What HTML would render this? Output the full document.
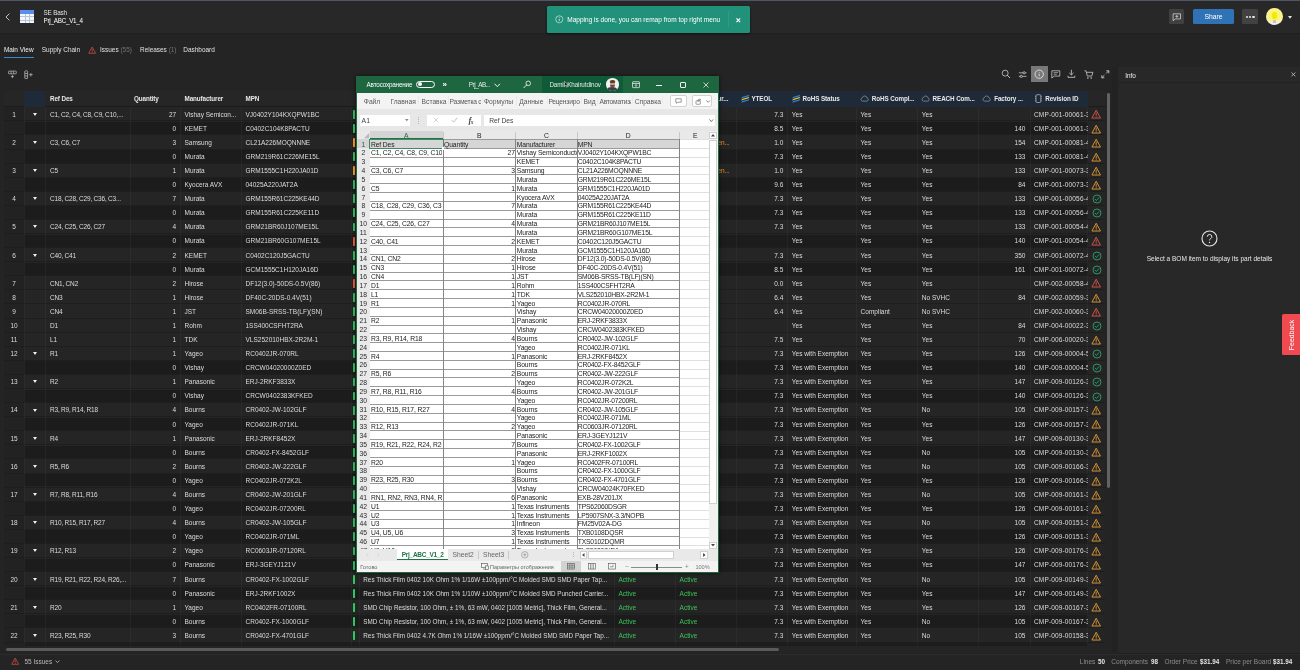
<!DOCTYPE html>
<html><head><meta charset="utf-8"><title>BOM</title><style>
html,body{margin:0;padding:0;background:#242424}
body{width:1300px;height:670px;position:relative;overflow:hidden;font-family:"Liberation Sans",sans-serif}
#root{position:absolute;left:0;top:0;width:1300px;height:670px;will-change:transform}
.t{position:absolute;font-size:6.5px;line-height:10px;height:10px;color:#dcdcdc;white-space:nowrap}
.t.h{color:#e8e8e8;font-weight:bold;font-size:6.3px;letter-spacing:-0.1px}
.t.c{text-align:center}
.t.d{font-size:6.33px}
.t.rf{letter-spacing:-0.15px;word-spacing:-0.3px}
.t.r{text-align:right}
.t.act{color:#3cc35a}
.t.org{color:#f3961f;letter-spacing:-0.1px}
.t.rev{width:53.8px;overflow:hidden;font-size:6.5px;letter-spacing:0.15px}
.t b{color:#e6e6e6}
.ic{position:absolute;overflow:visible}
.hdr{position:absolute;background:#262626;border-bottom:0.8px solid #1c1c1c;box-sizing:border-box}
.hsel{position:absolute;background:#1e2a37}
.row{position:absolute;left:24.2px;width:1081.3px;height:14.085px;box-sizing:border-box;border-bottom:0.7px solid #1e1e1e}
.row.rm{background:#252525}
.row.rs{background:#252525}
.row.rs::after{content:'';position:absolute;left:0;right:0;top:0.6px;bottom:0.1px;background:#1c1c1c}
.rnum{position:absolute;left:4px;width:20.2px;height:14.085px;background:#222;box-sizing:border-box;border-bottom:0.7px solid #1d1d1d}
.vsep{position:absolute;top:107.3px;width:0.8px;height:538.3px;background:rgba(255,255,255,0.035)}
.bar{position:absolute;left:352.8px;width:2.1px;height:8.9px;border-radius:0.4px}
.car{position:absolute;width:0;height:0;border-left:2.3px solid transparent;border-right:2.3px solid transparent;border-top:3.1px solid #f0f0f0}
#xl{position:absolute;background:#1d6640;box-shadow:0 0 4px rgba(0,0,0,.6)}
.xt{position:absolute;background:#1d6640}
.xt2{position:absolute;background:#105b37}
.x{position:absolute;line-height:10px;height:10px;white-space:nowrap}
.x.cell{font-size:6.75px;color:#1c1c1c;overflow:hidden;letter-spacing:-0.12px}
.x.cell.dd{letter-spacing:-0.2px}
</style></head><body><div id="root">
<div style="position:absolute;left:0;top:0;width:1300px;height:1.1px;background:#4f5566"></div>
<div style="position:absolute;left:0;top:1.1px;width:1300px;height:31.7px;background:#282828;border-bottom:0.9px solid #1f1f1f"></div>
<svg class="ic" style="left:5.2px;top:12.6px" width="5.4" height="8" viewBox="0 0 8 12"><path d="M6.6 1L1.4 6L6.6 11" fill="none" stroke="#d8d8d8" stroke-width="1.3"/></svg>
<div style="position:absolute;left:20.2px;top:10.4px;width:14.2px;height:12.4px;background:#f4f6fb;border-radius:0.6px;overflow:hidden"><div style="position:absolute;left:0;top:0;width:100%;height:3.2px;background:#5b8def"></div><div style="position:absolute;left:0;top:6.1px;width:100%;height:0.7px;background:#b9c3d6"></div><div style="position:absolute;left:0;top:9.2px;width:100%;height:0.7px;background:#b9c3d6"></div><div style="position:absolute;left:4.5px;top:3.2px;width:0.7px;height:10px;background:#b9c3d6"></div><div style="position:absolute;left:9.2px;top:3.2px;width:0.7px;height:10px;background:#b9c3d6"></div></div>
<div class="t" style="left:43.6px;top:7.7px;color:#e0e0e0;font-size:6.3px;letter-spacing:-0.18px">SE Bash</div>
<div class="t" style="left:43.6px;top:15.7px;color:#fff;font-size:6.3px;letter-spacing:-0.260px;">Prj_ABC_V1_4</div>
<div style="position:absolute;left:546.8px;top:6.3px;width:203.6px;height:26.6px;background:#22917a;border-radius:1.6px;box-shadow:0 1px 3px rgba(0,0,0,.5)"></div>
<svg class="ic" style="left:554.6px;top:15.4px" width="8.6" height="8.6" viewBox="0 0 16 16"><circle cx="8" cy="8" r="6.6" fill="none" stroke="#e8f5f1" stroke-width="1.1"/><path d="M8 7.2V11.4" stroke="#e8f5f1" stroke-width="1.3"/><circle cx="8" cy="5" r="0.9" fill="#e8f5f1"/></svg>
<div class="t" style="left:567.3px;top:14.7px;color:#fff;font-size:6.52px">Mapping is done, you can remap from top right menu</div>
<div style="position:absolute;left:728px;top:11.2px;width:0.6px;height:15.4px;background:#309c86"></div>
<svg class="ic" style="left:735.7px;top:17.5px" width="4.6" height="4.6" viewBox="0 0 10 10"><path d="M1 1L9 9M9 1L1 9" stroke="#fff" stroke-width="2.4"/></svg>
<div style="position:absolute;left:1169.2px;top:9.2px;width:15px;height:15.3px;background:#404040;border-radius:1.5px"></div>
<svg class="ic" style="left:1172px;top:12.8px" width="9.6" height="8.6" viewBox="0 0 18 16"><path d="M2 1.5H16V11H6L2 14.5V11Z" fill="none" stroke="#dedede" stroke-width="1.4" stroke-linejoin="round"/><path d="M9 3.6V8.8M6.2 6.2H11.8" stroke="#dedede" stroke-width="1.4"/></svg>
<div style="position:absolute;left:1193.4px;top:9px;width:40.2px;height:15.3px;background:#2f72b5;border-radius:1.6px"></div>
<div class="t" style="left:1193.4px;width:40.2px;text-align:center;top:11.6px;color:#fff;font-size:6.8px">Share</div>
<div style="position:absolute;left:1242.2px;top:9.2px;width:15.8px;height:15.3px;background:#424242;border-radius:1.5px"></div>
<div style="position:absolute;left:1245.6px;top:15.7px;width:2.3px;height:2.3px;border-radius:50%;background:#e6e6e6"></div>
<div style="position:absolute;left:1248.9px;top:15.7px;width:2.3px;height:2.3px;border-radius:50%;background:#e6e6e6"></div>
<div style="position:absolute;left:1252.3px;top:15.7px;width:2.3px;height:2.3px;border-radius:50%;background:#e6e6e6"></div>
<div style="position:absolute;left:1266.2px;top:8.2px;width:17px;height:17px;border-radius:50%;background:linear-gradient(180deg, rgba(255,255,255,0) 68%, #efefef 92%), radial-gradient(circle at 50% 44%, #f9f36e 0 24%, #faf58c 55%, #fbf8ae 82%)"></div>
<div style="position:absolute;left:1272px;top:12.4px;width:5.4px;height:6.8px;border-radius:50% 50% 45% 45%;background:#f7e900"></div>
<div style="position:absolute;left:1273.4px;top:19.8px;width:2.6px;height:2.8px;background:#c4c4c4;border-radius:0.6px"></div>
<svg class="ic" style="left:1287.6px;top:15.8px" width="4" height="2.8" viewBox="0 0 10 7"><path d="M0 0H10L5 7Z" fill="#e6e6e6"/></svg>
<div class="t" style="left:4px;top:44.9px;color:#f0f0f0;font-size:6.45px">Main View</div>
<div style="position:absolute;left:4px;top:56.6px;width:30px;height:1.1px;background:#3d86c9"></div>
<div class="t" style="left:41.8px;top:44.9px;color:#e0e0e0;font-size:6.45px">Supply Chain</div>
<svg class="ic" style="left:88.1px;top:45.6px" width="8.4" height="8.4" viewBox="0 0 20 20"><path d="M10 2.4 L18.2 17.4 H1.8 Z" fill="none" stroke="#d9534a" stroke-width="1.7" stroke-linejoin="round"/><path d="M10 7.6 V12.4" stroke="#d9534a" stroke-width="1.6" stroke-linecap="round"/><circle cx="10" cy="14.9" r="1" fill="#d9534a"/></svg>
<div class="t" style="left:100px;top:44.9px;color:#e0e0e0;font-size:6.45px">Issues <span style="color:#747474">(55)</span></div>
<div class="t" style="left:140px;top:44.9px;color:#e0e0e0;font-size:6.45px">Releases <span style="color:#747474">(1)</span></div>
<div class="t" style="left:183.3px;top:44.9px;color:#e0e0e0;font-size:6.45px">Dashboard</div>
<svg class="ic" style="left:7.7px;top:70.1px" width="8.8" height="9" viewBox="0 0 18 17"><rect x="1" y="1.5" width="16" height="5.6" rx="1" fill="none" stroke="#cfcfcf" stroke-width="1.3"/><path d="M6.3 1.5V7M11.7 1.5V7M9 9.5V16M5.8 12.8H12.2" stroke="#cfcfcf" stroke-width="1.3"/></svg>
<svg class="ic" style="left:23.6px;top:69.6px" width="9.2" height="9.4" viewBox="0 0 18 17"><rect x="1.5" y="1" width="5.6" height="15" rx="1" fill="none" stroke="#cfcfcf" stroke-width="1.3"/><path d="M1.5 6H7M1.5 11H7M10 8.5H17M13.5 5V12" stroke="#cfcfcf" stroke-width="1.3"/></svg>
<div style="position:absolute;left:1030.9px;top:66px;width:16.9px;height:16.3px;background:#787878"></div>
<svg class="ic" style="left:1001px;top:69px" width="9.6" height="9.6" viewBox="0 0 18 18"><circle cx="7.8" cy="7.8" r="5.6" fill="none" stroke="#d6d6d6" stroke-width="1.4"/><path d="M12 12L16.4 16.4" stroke="#d6d6d6" stroke-width="1.6" stroke-linecap="round"/></svg>
<svg class="ic" style="left:1018px;top:69.8px" width="9.4" height="9.2" viewBox="0 0 18 18"><path d="M1.5 5.5H16.5M1.5 12.5H16.5" stroke="#d6d6d6" stroke-width="1.4"/><circle cx="11.8" cy="5.5" r="2.2" fill="#242424" stroke="#d6d6d6" stroke-width="1.4"/><circle cx="6.2" cy="12.5" r="2.2" fill="#242424" stroke="#d6d6d6" stroke-width="1.4"/></svg>
<svg class="ic" style="left:1034.3px;top:68.8px" width="10.4" height="10.4" viewBox="0 0 18 18"><circle cx="9" cy="9" r="7.2" fill="none" stroke="#fff" stroke-width="1.2"/><path d="M9 8.2V12.8" stroke="#fff" stroke-width="1.2"/><circle cx="9" cy="5.8" r="0.8" fill="#fff"/></svg>
<svg class="ic" style="left:1050.6px;top:70px" width="9.6" height="9" viewBox="0 0 18 17"><path d="M1.5 1.5H16.5V11.5H6L1.5 15.2Z" fill="none" stroke="#d6d6d6" stroke-width="1.4" stroke-linejoin="round"/><path d="M4.8 5H13.2M4.8 8H10.8" stroke="#d6d6d6" stroke-width="1.2"/></svg>
<svg class="ic" style="left:1067.3px;top:68.9px" width="8.8" height="9.4" viewBox="0 0 16 18"><path d="M8 1.5V11M4 7.4L8 11.4L12 7.4M1.5 13V16H14.5V13" fill="none" stroke="#d6d6d6" stroke-width="1.5"/></svg>
<svg class="ic" style="left:1083.5px;top:69.6px" width="10" height="9.6" viewBox="0 0 20 19"><path d="M1 1.5H4L6.6 12H15.5L17.8 4.5H5" fill="none" stroke="#d6d6d6" stroke-width="1.5" stroke-linejoin="round"/><circle cx="7.8" cy="15.8" r="1.5" fill="#d6d6d6"/><circle cx="14.4" cy="15.8" r="1.5" fill="#d6d6d6"/></svg>
<svg class="ic" style="left:1101px;top:70px" width="8.6" height="8.6" viewBox="0 0 16 16"><path d="M9.8 1.5H14.5V6.2M14.5 1.5L9.6 6.4M6.2 14.5H1.5V9.8M1.5 14.5L6.4 9.6" fill="none" stroke="#d6d6d6" stroke-width="1.5"/></svg>
<div style="position:absolute;left:1111.6px;top:66.6px;width:6.6px;height:586px;background:#222"></div>
<div style="position:absolute;left:1118.2px;top:66.6px;width:181.8px;height:586.4px;background:#282828;border-bottom:0.9px solid #1f1f1f"></div>
<div style="position:absolute;left:1118.2px;top:82.4px;width:181.8px;height:0.7px;background:#222"></div>
<div class="t" style="left:1125.2px;top:70.5px;color:#ededed;font-size:6.4px">Info</div>
<svg class="ic" style="left:1290.6px;top:72.2px" width="4.8" height="4.8" viewBox="0 0 10 10"><path d="M1 1L9 9M9 1L1 9" stroke="#d8d8d8" stroke-width="1.5"/></svg>
<svg class="ic" style="left:1200.8px;top:229.6px" width="17" height="17" viewBox="0 0 34 34"><circle cx="17" cy="17" r="15" fill="none" stroke="#e6e6e6" stroke-width="2.2"/><path d="M12.6 13.4a4.5 4.5 0 1 1 6.6 4c-1.6 .9 -2.2 1.6 -2.2 3.4" fill="none" stroke="#e6e6e6" stroke-width="2"/><circle cx="17" cy="25" r="1.4" fill="#e6e6e6"/></svg>
<div class="t" style="left:1118.6px;width:181.8px;text-align:center;top:253.8px;color:#e8e8e8;font-size:6.53px">Select a BOM item to display its part details</div>
<div style="position:absolute;left:1282.4px;top:314.4px;width:17.6px;height:40.6px;background:#f04a50;border-radius:1.6px 0 0 1.6px"></div>
<div class="t" style="left:1272.2px;top:329.8px;width:40px;text-align:center;color:#fff;font-size:6.9px;transform:rotate(-90deg)">Feedback</div>
<div style="position:absolute;left:0;top:654px;width:1300px;height:16px;background:#242424;border-top:0.8px solid #2c2c2c;box-sizing:border-box"></div>
<svg class="ic" style="left:11.4px;top:657.3px" width="8.4" height="8.4" viewBox="0 0 20 20"><path d="M10 2.4 L18.2 17.4 H1.8 Z" fill="none" stroke="#d9534a" stroke-width="1.7" stroke-linejoin="round"/><path d="M10 7.6 V12.4" stroke="#d9534a" stroke-width="1.6" stroke-linecap="round"/><circle cx="10" cy="14.9" r="1" fill="#d9534a"/></svg>
<div class="t" style="left:24.4px;top:656.6px;color:#b8b8b8;font-size:6.5px">55 Issues</div>
<svg class="ic" style="left:54.8px;top:660.2px" width="5" height="3.4" viewBox="0 0 10 7"><path d="M1 1L5 5.5L9 1" fill="none" stroke="#b8b8b8" stroke-width="1.6"/></svg>
<div class="t" style="left:1079.8px;top:656.9px;color:#8e8e8e;font-size:6.5px">Lines</div>
<div class="t" style="left:1098px;top:656.9px;color:#e4e4e4;font-weight:bold;font-size:6.3px">50</div>
<div class="t" style="left:1111.2px;top:656.9px;color:#8e8e8e;font-size:6.5px">Components</div>
<div class="t" style="left:1151px;top:656.9px;color:#e4e4e4;font-weight:bold;font-size:6.3px">98</div>
<div class="t" style="left:1164.4px;top:656.9px;color:#8e8e8e;font-size:6.5px">Order Price</div>
<div class="t" style="left:1200px;top:656.9px;color:#e4e4e4;font-weight:bold;font-size:6.3px">$31.94</div>
<div class="t" style="left:1226px;top:656.9px;color:#8e8e8e;font-size:6.5px">Price per Board</div>
<div class="t" style="left:1273.1px;top:656.9px;color:#e4e4e4;font-weight:bold;font-size:6.3px">$31.94</div>
<div id="bom">
<div class="hdr" style="left:4px;top:91.2px;width:1101.5px;height:16.1px"></div>
<div class="hsel" style="left:24.2px;top:91.2px;width:21px;height:16.1px"></div>
<div class="hsel" style="left:700px;top:91.2px;width:387.70000000000005px;height:16.1px"></div>
<div class="t h " style="left:50px;top:93.9px">Ref Des</div>
<div class="t h " style="left:134px;top:93.9px">Quantity</div>
<div class="t h " style="left:184.5px;top:93.9px">Manufacturer</div>
<div class="t h " style="left:245.5px;top:93.9px">MPN</div>
<div class="t h " style="left:717.6px;top:93.9px">ur...</div>
<div class="t h " style="left:751.5px;top:93.9px">YTEOL</div>
<div class="t h " style="left:802.6px;top:93.9px">RoHS Status</div>
<div class="t h " style="left:871.8px;top:93.9px">RoHS Compl...</div>
<div class="t h " style="left:932.6px;top:93.9px">REACH Com...</div>
<div class="t h " style="left:994.2px;top:93.9px">Factory ...</div>
<div class="t h " style="left:1045.2px;top:93.9px">Revision ID</div>
<svg class="ic" style="left:740.5px;top:94.4px" width="8.8" height="8.6" viewBox="0 0 22 21"><path d="M2.5 7 L21 1.5 L19 5.2 L0.5 10.7Z" fill="#2f86d6"/><path d="M2.5 12.3 L21 6.8 L19 10.6 L0.5 16.1Z" fill="#f2c230"/><path d="M2.5 17.6 L21 12.1 L19 15.9 L0.5 21.4Z" fill="#2f86d6"/></svg>
<svg class="ic" style="left:791.8000000000001px;top:94.4px" width="8.8" height="8.6" viewBox="0 0 22 21"><path d="M2.5 7 L21 1.5 L19 5.2 L0.5 10.7Z" fill="#2f86d6"/><path d="M2.5 12.3 L21 6.8 L19 10.6 L0.5 16.1Z" fill="#f2c230"/><path d="M2.5 17.6 L21 12.1 L19 15.9 L0.5 21.4Z" fill="#2f86d6"/></svg>
<svg class="ic" style="left:859.7px;top:95.30000000000001px" width="9" height="7" viewBox="0 0 24 18"><path d="M6.5 16 H18 a4.3 4.3 0 0 0 .6 -8.5 A6.3 6.3 0 0 0 6.4 6.6 A4.8 4.8 0 0 0 6.5 16Z" fill="none" stroke="#9aa3ad" stroke-width="1.8"/></svg>
<svg class="ic" style="left:920.7px;top:95.30000000000001px" width="9" height="7" viewBox="0 0 24 18"><path d="M6.5 16 H18 a4.3 4.3 0 0 0 .6 -8.5 A6.3 6.3 0 0 0 6.4 6.6 A4.8 4.8 0 0 0 6.5 16Z" fill="none" stroke="#9aa3ad" stroke-width="1.8"/></svg>
<svg class="ic" style="left:982.2px;top:95.30000000000001px" width="9" height="7" viewBox="0 0 24 18"><path d="M6.5 16 H18 a4.3 4.3 0 0 0 .6 -8.5 A6.3 6.3 0 0 0 6.4 6.6 A4.8 4.8 0 0 0 6.5 16Z" fill="none" stroke="#9aa3ad" stroke-width="1.8"/></svg>
<svg class="ic" style="left:1034.8px;top:94.30000000000001px" width="6.8" height="9.2" viewBox="0 0 14 19"><rect x="2" y="1.5" width="10" height="16" rx="2" fill="none" stroke="#b8c0c8" stroke-width="1.5"/><path d="M0 5H2M0 9.5H2M0 14H2M12 5H14M12 9.5H14M12 14H14" stroke="#b8c0c8" stroke-width="1.3"/></svg>
<div class="row rm" style="top:107.30px"></div>
<div class="rnum" style="top:107.30px"></div>
<div class="rnum" style="top:107.30px;left:1087.7px;width:17.8px;background:#252525"></div>
<div class="t c" style="left:4px;width:20.2px;top:109.69px">1</div>
<div class="car" style="left:32.800000000000004px;top:112.74px"></div>
<div class="t rf" style="left:50px;top:109.69px">C1, C2, C4, C8, C9, C10,...</div>
<div class="t r " style="left:116.19999999999999px;width:60px;top:109.69px">27</div>
<div class="t " style="left:184.5px;top:109.69px">Vishay Semicon...</div>
<div class="t " style="left:245.5px;top:109.69px">VJ0402Y104KXQPW1BC</div>
<div class="bar" style="top:109.90px;background:#2fc75f"></div>
<div class="t r " style="left:723.3px;width:60px;top:109.69px">7.3</div>
<div class="t " style="left:791.8px;top:109.69px">Yes</div>
<div class="t " style="left:860.6px;top:109.69px">Yes</div>
<div class="t " style="left:921.8px;top:109.69px">Yes</div>
<div class="t rev" style="left:1034px;top:109.69px">CMP-001-00061-3</div>
<svg class="ic" style="left:1091.30px;top:109.44px" width="10.4" height="10.4" viewBox="0 0 20 20"><path d="M10 2.4 L18.2 17.4 H1.8 Z" fill="none" stroke="#e2574c" stroke-width="1.7" stroke-linejoin="round"/><path d="M10 7.6 V12.4" stroke="#e2574c" stroke-width="1.6" stroke-linecap="round"/><circle cx="10" cy="14.9" r="1" fill="#e2574c"/></svg>
<div class="row rs" style="top:121.38px"></div>
<div class="rnum" style="top:121.38px"></div>
<div class="rnum" style="top:121.38px;left:1087.7px;width:17.8px;background:#252525"></div>
<div class="t r " style="left:116.19999999999999px;width:60px;top:123.78px">0</div>
<div class="t " style="left:184.5px;top:123.78px">KEMET</div>
<div class="t " style="left:245.5px;top:123.78px">C0402C104K8PACTU</div>
<div class="bar" style="top:123.98px;background:#2fc75f"></div>
<div class="t r " style="left:723.3px;width:60px;top:123.78px">8.5</div>
<div class="t " style="left:791.8px;top:123.78px">Yes</div>
<div class="t " style="left:860.6px;top:123.78px">Yes</div>
<div class="t " style="left:921.8px;top:123.78px">Yes</div>
<div class="t r " style="left:965.4000000000001px;width:60px;top:123.78px">140</div>
<div class="t rev" style="left:1034px;top:123.78px">CMP-001-00061-3</div>
<svg class="ic" style="left:1091.30px;top:123.53px" width="10.4" height="10.4" viewBox="0 0 20 20"><path d="M10 2.4 L18.2 17.4 H1.8 Z" fill="none" stroke="#e89f35" stroke-width="1.7" stroke-linejoin="round"/><path d="M10 7.6 V12.4" stroke="#e89f35" stroke-width="1.6" stroke-linecap="round"/><circle cx="10" cy="14.9" r="1" fill="#e89f35"/></svg>
<div class="row rm" style="top:135.47px"></div>
<div class="rnum" style="top:135.47px"></div>
<div class="rnum" style="top:135.47px;left:1087.7px;width:17.8px;background:#252525"></div>
<div class="t c" style="left:4px;width:20.2px;top:137.86px">2</div>
<div class="car" style="left:32.800000000000004px;top:140.91px"></div>
<div class="t rf" style="left:50px;top:137.86px">C3, C6, C7</div>
<div class="t r " style="left:116.19999999999999px;width:60px;top:137.86px">3</div>
<div class="t " style="left:184.5px;top:137.86px">Samsung</div>
<div class="t " style="left:245.5px;top:137.86px">CL21A226MOQNNNE</div>
<div class="bar" style="top:138.07px;background:#f5a21e"></div>
<div class="t org" style="left:717.4px;top:137.86px">en...</div>
<div class="t r " style="left:723.3px;width:60px;top:137.86px">1.0</div>
<div class="t " style="left:791.8px;top:137.86px">Yes</div>
<div class="t " style="left:860.6px;top:137.86px">Yes</div>
<div class="t " style="left:921.8px;top:137.86px">Yes</div>
<div class="t r " style="left:965.4000000000001px;width:60px;top:137.86px">154</div>
<div class="t rev" style="left:1034px;top:137.86px">CMP-001-00081-4</div>
<svg class="ic" style="left:1091.30px;top:137.61px" width="10.4" height="10.4" viewBox="0 0 20 20"><path d="M10 2.4 L18.2 17.4 H1.8 Z" fill="none" stroke="#e89f35" stroke-width="1.7" stroke-linejoin="round"/><path d="M10 7.6 V12.4" stroke="#e89f35" stroke-width="1.6" stroke-linecap="round"/><circle cx="10" cy="14.9" r="1" fill="#e89f35"/></svg>
<div class="row rs" style="top:149.56px"></div>
<div class="rnum" style="top:149.56px"></div>
<div class="rnum" style="top:149.56px;left:1087.7px;width:17.8px;background:#252525"></div>
<div class="t r " style="left:116.19999999999999px;width:60px;top:151.95px">0</div>
<div class="t " style="left:184.5px;top:151.95px">Murata</div>
<div class="t " style="left:245.5px;top:151.95px">GRM219R61C226ME15L</div>
<div class="bar" style="top:152.16px;background:#2fc75f"></div>
<div class="t r " style="left:723.3px;width:60px;top:151.95px">7.3</div>
<div class="t " style="left:791.8px;top:151.95px">Yes</div>
<div class="t " style="left:860.6px;top:151.95px">Yes</div>
<div class="t " style="left:921.8px;top:151.95px">Yes</div>
<div class="t r " style="left:965.4000000000001px;width:60px;top:151.95px">133</div>
<div class="t rev" style="left:1034px;top:151.95px">CMP-001-00081-4</div>
<svg class="ic" style="left:1091.30px;top:151.70px" width="10.4" height="10.4" viewBox="0 0 20 20"><path d="M10 2.4 L18.2 17.4 H1.8 Z" fill="none" stroke="#e89f35" stroke-width="1.7" stroke-linejoin="round"/><path d="M10 7.6 V12.4" stroke="#e89f35" stroke-width="1.6" stroke-linecap="round"/><circle cx="10" cy="14.9" r="1" fill="#e89f35"/></svg>
<div class="row rm" style="top:163.64px"></div>
<div class="rnum" style="top:163.64px"></div>
<div class="rnum" style="top:163.64px;left:1087.7px;width:17.8px;background:#252525"></div>
<div class="t c" style="left:4px;width:20.2px;top:166.03px">3</div>
<div class="car" style="left:32.800000000000004px;top:169.08px"></div>
<div class="t rf" style="left:50px;top:166.03px">C5</div>
<div class="t r " style="left:116.19999999999999px;width:60px;top:166.03px">1</div>
<div class="t " style="left:184.5px;top:166.03px">Murata</div>
<div class="t " style="left:245.5px;top:166.03px">GRM1555C1H220JA01D</div>
<div class="bar" style="top:166.24px;background:#f5a21e"></div>
<div class="t org" style="left:717.4px;top:166.03px">en...</div>
<div class="t r " style="left:723.3px;width:60px;top:166.03px">1.0</div>
<div class="t " style="left:791.8px;top:166.03px">Yes</div>
<div class="t " style="left:860.6px;top:166.03px">Yes</div>
<div class="t " style="left:921.8px;top:166.03px">Yes</div>
<div class="t r " style="left:965.4000000000001px;width:60px;top:166.03px">133</div>
<div class="t rev" style="left:1034px;top:166.03px">CMP-001-00073-3</div>
<svg class="ic" style="left:1091.30px;top:165.78px" width="10.4" height="10.4" viewBox="0 0 20 20"><path d="M10 2.4 L18.2 17.4 H1.8 Z" fill="none" stroke="#e89f35" stroke-width="1.7" stroke-linejoin="round"/><path d="M10 7.6 V12.4" stroke="#e89f35" stroke-width="1.6" stroke-linecap="round"/><circle cx="10" cy="14.9" r="1" fill="#e89f35"/></svg>
<div class="row rs" style="top:177.73px"></div>
<div class="rnum" style="top:177.73px"></div>
<div class="rnum" style="top:177.73px;left:1087.7px;width:17.8px;background:#252525"></div>
<div class="t r " style="left:116.19999999999999px;width:60px;top:180.12px">0</div>
<div class="t " style="left:184.5px;top:180.12px">Kyocera AVX</div>
<div class="t " style="left:245.5px;top:180.12px">04025A220JAT2A</div>
<div class="bar" style="top:180.33px;background:#2fc75f"></div>
<div class="t r " style="left:723.3px;width:60px;top:180.12px">9.6</div>
<div class="t " style="left:791.8px;top:180.12px">Yes</div>
<div class="t " style="left:860.6px;top:180.12px">Yes</div>
<div class="t " style="left:921.8px;top:180.12px">Yes</div>
<div class="t r " style="left:965.4000000000001px;width:60px;top:180.12px">84</div>
<div class="t rev" style="left:1034px;top:180.12px">CMP-001-00073-3</div>
<svg class="ic" style="left:1091.30px;top:179.87px" width="10.4" height="10.4" viewBox="0 0 20 20"><path d="M10 2.4 L18.2 17.4 H1.8 Z" fill="none" stroke="#e89f35" stroke-width="1.7" stroke-linejoin="round"/><path d="M10 7.6 V12.4" stroke="#e89f35" stroke-width="1.6" stroke-linecap="round"/><circle cx="10" cy="14.9" r="1" fill="#e89f35"/></svg>
<div class="row rm" style="top:191.81px"></div>
<div class="rnum" style="top:191.81px"></div>
<div class="rnum" style="top:191.81px;left:1087.7px;width:17.8px;background:#252525"></div>
<div class="t c" style="left:4px;width:20.2px;top:194.20px">4</div>
<div class="car" style="left:32.800000000000004px;top:197.25px"></div>
<div class="t rf" style="left:50px;top:194.20px">C18, C28, C29, C36, C3...</div>
<div class="t r " style="left:116.19999999999999px;width:60px;top:194.20px">7</div>
<div class="t " style="left:184.5px;top:194.20px">Murata</div>
<div class="t " style="left:245.5px;top:194.20px">GRM155R61C225KE44D</div>
<div class="bar" style="top:194.41px;background:#2fc75f"></div>
<div class="t r " style="left:723.3px;width:60px;top:194.20px">7.3</div>
<div class="t " style="left:791.8px;top:194.20px">Yes</div>
<div class="t " style="left:860.6px;top:194.20px">Yes</div>
<div class="t " style="left:921.8px;top:194.20px">Yes</div>
<div class="t r " style="left:965.4000000000001px;width:60px;top:194.20px">133</div>
<div class="t rev" style="left:1034px;top:194.20px">CMP-001-00056-4</div>
<svg class="ic" style="left:1091.50px;top:194.35px" width="10" height="10" viewBox="0 0 20 20"><circle cx="10" cy="10" r="8" fill="none" stroke="#2ea673" stroke-width="1.7"/><path d="M6.2 10.3 L9 13 L13.8 7.4" fill="none" stroke="#2ea673" stroke-width="1.7" stroke-linecap="round" stroke-linejoin="round"/></svg>
<div class="row rs" style="top:205.89px"></div>
<div class="rnum" style="top:205.89px"></div>
<div class="rnum" style="top:205.89px;left:1087.7px;width:17.8px;background:#252525"></div>
<div class="t r " style="left:116.19999999999999px;width:60px;top:208.29px">0</div>
<div class="t " style="left:184.5px;top:208.29px">Murata</div>
<div class="t " style="left:245.5px;top:208.29px">GRM155R61C225KE11D</div>
<div class="bar" style="top:208.49px;background:#2fc75f"></div>
<div class="t r " style="left:723.3px;width:60px;top:208.29px">7.3</div>
<div class="t " style="left:791.8px;top:208.29px">Yes</div>
<div class="t " style="left:860.6px;top:208.29px">Yes</div>
<div class="t " style="left:921.8px;top:208.29px">Yes</div>
<div class="t r " style="left:965.4000000000001px;width:60px;top:208.29px">133</div>
<div class="t rev" style="left:1034px;top:208.29px">CMP-001-00056-4</div>
<svg class="ic" style="left:1091.50px;top:208.44px" width="10" height="10" viewBox="0 0 20 20"><circle cx="10" cy="10" r="8" fill="none" stroke="#2ea673" stroke-width="1.7"/><path d="M6.2 10.3 L9 13 L13.8 7.4" fill="none" stroke="#2ea673" stroke-width="1.7" stroke-linecap="round" stroke-linejoin="round"/></svg>
<div class="row rm" style="top:219.98px"></div>
<div class="rnum" style="top:219.98px"></div>
<div class="rnum" style="top:219.98px;left:1087.7px;width:17.8px;background:#252525"></div>
<div class="t c" style="left:4px;width:20.2px;top:222.37px">5</div>
<div class="car" style="left:32.800000000000004px;top:225.42px"></div>
<div class="t rf" style="left:50px;top:222.37px">C24, C25, C26, C27</div>
<div class="t r " style="left:116.19999999999999px;width:60px;top:222.37px">4</div>
<div class="t " style="left:184.5px;top:222.37px">Murata</div>
<div class="t " style="left:245.5px;top:222.37px">GRM21BR60J107ME15L</div>
<div class="bar" style="top:222.58px;background:#2fc75f"></div>
<div class="t r " style="left:723.3px;width:60px;top:222.37px">7.3</div>
<div class="t " style="left:791.8px;top:222.37px">Yes</div>
<div class="t " style="left:860.6px;top:222.37px">Yes</div>
<div class="t " style="left:921.8px;top:222.37px">Yes</div>
<div class="t r " style="left:965.4000000000001px;width:60px;top:222.37px">133</div>
<div class="t rev" style="left:1034px;top:222.37px">CMP-001-00054-4</div>
<svg class="ic" style="left:1091.30px;top:222.12px" width="10.4" height="10.4" viewBox="0 0 20 20"><path d="M10 2.4 L18.2 17.4 H1.8 Z" fill="none" stroke="#e89f35" stroke-width="1.7" stroke-linejoin="round"/><path d="M10 7.6 V12.4" stroke="#e89f35" stroke-width="1.6" stroke-linecap="round"/><circle cx="10" cy="14.9" r="1" fill="#e89f35"/></svg>
<div class="row rs" style="top:234.06px"></div>
<div class="rnum" style="top:234.06px"></div>
<div class="rnum" style="top:234.06px;left:1087.7px;width:17.8px;background:#252525"></div>
<div class="t r " style="left:116.19999999999999px;width:60px;top:236.46px">0</div>
<div class="t " style="left:184.5px;top:236.46px">Murata</div>
<div class="t " style="left:245.5px;top:236.46px">GRM21BR60G107ME15L</div>
<div class="bar" style="top:236.66px;background:#f05a3c"></div>
<div class="t " style="left:791.8px;top:236.46px">Yes</div>
<div class="t " style="left:860.6px;top:236.46px">Yes</div>
<div class="t " style="left:921.8px;top:236.46px">Yes</div>
<div class="t r " style="left:965.4000000000001px;width:60px;top:236.46px">140</div>
<div class="t rev" style="left:1034px;top:236.46px">CMP-001-00054-4</div>
<svg class="ic" style="left:1091.30px;top:236.21px" width="10.4" height="10.4" viewBox="0 0 20 20"><path d="M10 2.4 L18.2 17.4 H1.8 Z" fill="none" stroke="#e2574c" stroke-width="1.7" stroke-linejoin="round"/><path d="M10 7.6 V12.4" stroke="#e2574c" stroke-width="1.6" stroke-linecap="round"/><circle cx="10" cy="14.9" r="1" fill="#e2574c"/></svg>
<div class="row rm" style="top:248.15px"></div>
<div class="rnum" style="top:248.15px"></div>
<div class="rnum" style="top:248.15px;left:1087.7px;width:17.8px;background:#252525"></div>
<div class="t c" style="left:4px;width:20.2px;top:250.54px">6</div>
<div class="car" style="left:32.800000000000004px;top:253.59px"></div>
<div class="t rf" style="left:50px;top:250.54px">C40, C41</div>
<div class="t r " style="left:116.19999999999999px;width:60px;top:250.54px">2</div>
<div class="t " style="left:184.5px;top:250.54px">KEMET</div>
<div class="t " style="left:245.5px;top:250.54px">C0402C120J5GACTU</div>
<div class="bar" style="top:250.75px;background:#2fc75f"></div>
<div class="t r " style="left:723.3px;width:60px;top:250.54px">7.3</div>
<div class="t " style="left:791.8px;top:250.54px">Yes</div>
<div class="t " style="left:860.6px;top:250.54px">Yes</div>
<div class="t " style="left:921.8px;top:250.54px">Yes</div>
<div class="t r " style="left:965.4000000000001px;width:60px;top:250.54px">350</div>
<div class="t rev" style="left:1034px;top:250.54px">CMP-001-00072-4</div>
<svg class="ic" style="left:1091.50px;top:250.69px" width="10" height="10" viewBox="0 0 20 20"><circle cx="10" cy="10" r="8" fill="none" stroke="#2ea673" stroke-width="1.7"/><path d="M6.2 10.3 L9 13 L13.8 7.4" fill="none" stroke="#2ea673" stroke-width="1.7" stroke-linecap="round" stroke-linejoin="round"/></svg>
<div class="row rs" style="top:262.24px"></div>
<div class="rnum" style="top:262.24px"></div>
<div class="rnum" style="top:262.24px;left:1087.7px;width:17.8px;background:#252525"></div>
<div class="t r " style="left:116.19999999999999px;width:60px;top:264.63px">0</div>
<div class="t " style="left:184.5px;top:264.63px">Murata</div>
<div class="t " style="left:245.5px;top:264.63px">GCM1555C1H120JA16D</div>
<div class="bar" style="top:264.84px;background:#2fc75f"></div>
<div class="t r " style="left:723.3px;width:60px;top:264.63px">8.5</div>
<div class="t " style="left:791.8px;top:264.63px">Yes</div>
<div class="t " style="left:860.6px;top:264.63px">Yes</div>
<div class="t " style="left:921.8px;top:264.63px">Yes</div>
<div class="t r " style="left:965.4000000000001px;width:60px;top:264.63px">161</div>
<div class="t rev" style="left:1034px;top:264.63px">CMP-001-00072-4</div>
<svg class="ic" style="left:1091.50px;top:264.78px" width="10" height="10" viewBox="0 0 20 20"><circle cx="10" cy="10" r="8" fill="none" stroke="#2ea673" stroke-width="1.7"/><path d="M6.2 10.3 L9 13 L13.8 7.4" fill="none" stroke="#2ea673" stroke-width="1.7" stroke-linecap="round" stroke-linejoin="round"/></svg>
<div class="row rm" style="top:276.32px"></div>
<div class="rnum" style="top:276.32px"></div>
<div class="rnum" style="top:276.32px;left:1087.7px;width:17.8px;background:#252525"></div>
<div class="t c" style="left:4px;width:20.2px;top:278.71px">7</div>
<div class="t rf" style="left:50px;top:278.71px">CN1, CN2</div>
<div class="t r " style="left:116.19999999999999px;width:60px;top:278.71px">2</div>
<div class="t " style="left:184.5px;top:278.71px">Hirose</div>
<div class="t " style="left:245.5px;top:278.71px">DF12(3.0)-50DS-0.5V(86)</div>
<div class="bar" style="top:278.92px;background:#f05a3c"></div>
<div class="t r " style="left:723.3px;width:60px;top:278.71px">0.0</div>
<div class="t " style="left:791.8px;top:278.71px">Yes</div>
<div class="t " style="left:860.6px;top:278.71px">Yes</div>
<div class="t " style="left:921.8px;top:278.71px">Yes</div>
<div class="t rev" style="left:1034px;top:278.71px">CMP-002-00058-4</div>
<svg class="ic" style="left:1091.30px;top:278.46px" width="10.4" height="10.4" viewBox="0 0 20 20"><path d="M10 2.4 L18.2 17.4 H1.8 Z" fill="none" stroke="#e2574c" stroke-width="1.7" stroke-linejoin="round"/><path d="M10 7.6 V12.4" stroke="#e2574c" stroke-width="1.6" stroke-linecap="round"/><circle cx="10" cy="14.9" r="1" fill="#e2574c"/></svg>
<div class="row rm" style="top:290.41px"></div>
<div class="rnum" style="top:290.41px"></div>
<div class="rnum" style="top:290.41px;left:1087.7px;width:17.8px;background:#252525"></div>
<div class="t c" style="left:4px;width:20.2px;top:292.80px">8</div>
<div class="t rf" style="left:50px;top:292.80px">CN3</div>
<div class="t r " style="left:116.19999999999999px;width:60px;top:292.80px">1</div>
<div class="t " style="left:184.5px;top:292.80px">Hirose</div>
<div class="t " style="left:245.5px;top:292.80px">DF40C-20DS-0.4V(51)</div>
<div class="bar" style="top:293.01px;background:#2fc75f"></div>
<div class="t r " style="left:723.3px;width:60px;top:292.80px">6.4</div>
<div class="t " style="left:791.8px;top:292.80px">Yes</div>
<div class="t " style="left:860.6px;top:292.80px">Yes</div>
<div class="t " style="left:921.8px;top:292.80px">No SVHC</div>
<div class="t r " style="left:965.4000000000001px;width:60px;top:292.80px">84</div>
<div class="t rev" style="left:1034px;top:292.80px">CMP-002-00059-3</div>
<svg class="ic" style="left:1091.30px;top:292.55px" width="10.4" height="10.4" viewBox="0 0 20 20"><path d="M10 2.4 L18.2 17.4 H1.8 Z" fill="none" stroke="#e89f35" stroke-width="1.7" stroke-linejoin="round"/><path d="M10 7.6 V12.4" stroke="#e89f35" stroke-width="1.6" stroke-linecap="round"/><circle cx="10" cy="14.9" r="1" fill="#e89f35"/></svg>
<div class="row rm" style="top:304.49px"></div>
<div class="rnum" style="top:304.49px"></div>
<div class="rnum" style="top:304.49px;left:1087.7px;width:17.8px;background:#252525"></div>
<div class="t c" style="left:4px;width:20.2px;top:306.88px">9</div>
<div class="t rf" style="left:50px;top:306.88px">CN4</div>
<div class="t r " style="left:116.19999999999999px;width:60px;top:306.88px">1</div>
<div class="t " style="left:184.5px;top:306.88px">JST</div>
<div class="t " style="left:245.5px;top:306.88px">SM06B-SRSS-TB(LF)(SN)</div>
<div class="bar" style="top:307.09px;background:#2fc75f"></div>
<div class="t r " style="left:723.3px;width:60px;top:306.88px">6.4</div>
<div class="t " style="left:791.8px;top:306.88px">Yes</div>
<div class="t " style="left:860.6px;top:306.88px">Compliant</div>
<div class="t " style="left:921.8px;top:306.88px">No SVHC</div>
<div class="t rev" style="left:1034px;top:306.88px">CMP-002-00060-3</div>
<svg class="ic" style="left:1091.30px;top:306.63px" width="10.4" height="10.4" viewBox="0 0 20 20"><path d="M10 2.4 L18.2 17.4 H1.8 Z" fill="none" stroke="#e2574c" stroke-width="1.7" stroke-linejoin="round"/><path d="M10 7.6 V12.4" stroke="#e2574c" stroke-width="1.6" stroke-linecap="round"/><circle cx="10" cy="14.9" r="1" fill="#e2574c"/></svg>
<div class="row rm" style="top:318.57px"></div>
<div class="rnum" style="top:318.57px"></div>
<div class="rnum" style="top:318.57px;left:1087.7px;width:17.8px;background:#252525"></div>
<div class="t c" style="left:4px;width:20.2px;top:320.97px">10</div>
<div class="t rf" style="left:50px;top:320.97px">D1</div>
<div class="t r " style="left:116.19999999999999px;width:60px;top:320.97px">1</div>
<div class="t " style="left:184.5px;top:320.97px">Rohm</div>
<div class="t " style="left:245.5px;top:320.97px">1SS400CSFHT2RA</div>
<div class="bar" style="top:321.18px;background:#2fc75f"></div>
<div class="t " style="left:791.8px;top:320.97px">Yes</div>
<div class="t " style="left:860.6px;top:320.97px">Yes</div>
<div class="t " style="left:921.8px;top:320.97px">Yes</div>
<div class="t r " style="left:965.4000000000001px;width:60px;top:320.97px">84</div>
<div class="t rev" style="left:1034px;top:320.97px">CMP-004-00022-3</div>
<svg class="ic" style="left:1091.50px;top:321.12px" width="10" height="10" viewBox="0 0 20 20"><circle cx="10" cy="10" r="8" fill="none" stroke="#2ea673" stroke-width="1.7"/><path d="M6.2 10.3 L9 13 L13.8 7.4" fill="none" stroke="#2ea673" stroke-width="1.7" stroke-linecap="round" stroke-linejoin="round"/></svg>
<div class="row rm" style="top:332.66px"></div>
<div class="rnum" style="top:332.66px"></div>
<div class="rnum" style="top:332.66px;left:1087.7px;width:17.8px;background:#252525"></div>
<div class="t c" style="left:4px;width:20.2px;top:335.05px">11</div>
<div class="t rf" style="left:50px;top:335.05px">L1</div>
<div class="t r " style="left:116.19999999999999px;width:60px;top:335.05px">1</div>
<div class="t " style="left:184.5px;top:335.05px">TDK</div>
<div class="t " style="left:245.5px;top:335.05px">VLS252010HBX-2R2M-1</div>
<div class="bar" style="top:335.26px;background:#2fc75f"></div>
<div class="t r " style="left:723.3px;width:60px;top:335.05px">7.5</div>
<div class="t " style="left:791.8px;top:335.05px">Yes</div>
<div class="t " style="left:860.6px;top:335.05px">Yes</div>
<div class="t " style="left:921.8px;top:335.05px">Yes</div>
<div class="t r " style="left:965.4000000000001px;width:60px;top:335.05px">70</div>
<div class="t rev" style="left:1034px;top:335.05px">CMP-006-00020-3</div>
<svg class="ic" style="left:1091.30px;top:334.80px" width="10.4" height="10.4" viewBox="0 0 20 20"><path d="M10 2.4 L18.2 17.4 H1.8 Z" fill="none" stroke="#e89f35" stroke-width="1.7" stroke-linejoin="round"/><path d="M10 7.6 V12.4" stroke="#e89f35" stroke-width="1.6" stroke-linecap="round"/><circle cx="10" cy="14.9" r="1" fill="#e89f35"/></svg>
<div class="row rm" style="top:346.75px"></div>
<div class="rnum" style="top:346.75px"></div>
<div class="rnum" style="top:346.75px;left:1087.7px;width:17.8px;background:#252525"></div>
<div class="t c" style="left:4px;width:20.2px;top:349.14px">12</div>
<div class="car" style="left:32.800000000000004px;top:352.19px"></div>
<div class="t rf" style="left:50px;top:349.14px">R1</div>
<div class="t r " style="left:116.19999999999999px;width:60px;top:349.14px">1</div>
<div class="t " style="left:184.5px;top:349.14px">Yageo</div>
<div class="t " style="left:245.5px;top:349.14px">RC0402JR-070RL</div>
<div class="bar" style="top:349.35px;background:#2fc75f"></div>
<div class="t r " style="left:723.3px;width:60px;top:349.14px">7.3</div>
<div class="t " style="left:791.8px;top:349.14px">Yes with Exemption</div>
<div class="t " style="left:860.6px;top:349.14px">Yes</div>
<div class="t " style="left:921.8px;top:349.14px">Yes</div>
<div class="t r " style="left:965.4000000000001px;width:60px;top:349.14px">126</div>
<div class="t rev" style="left:1034px;top:349.14px">CMP-009-00004-5</div>
<svg class="ic" style="left:1091.50px;top:349.29px" width="10" height="10" viewBox="0 0 20 20"><circle cx="10" cy="10" r="8" fill="none" stroke="#2ea673" stroke-width="1.7"/><path d="M6.2 10.3 L9 13 L13.8 7.4" fill="none" stroke="#2ea673" stroke-width="1.7" stroke-linecap="round" stroke-linejoin="round"/></svg>
<div class="row rs" style="top:360.83px"></div>
<div class="rnum" style="top:360.83px"></div>
<div class="rnum" style="top:360.83px;left:1087.7px;width:17.8px;background:#252525"></div>
<div class="t r " style="left:116.19999999999999px;width:60px;top:363.22px">0</div>
<div class="t " style="left:184.5px;top:363.22px">Vishay</div>
<div class="t " style="left:245.5px;top:363.22px">CRCW04020000Z0ED</div>
<div class="bar" style="top:363.43px;background:#2fc75f"></div>
<div class="t r " style="left:723.3px;width:60px;top:363.22px">7.3</div>
<div class="t " style="left:791.8px;top:363.22px">Yes with Exemption</div>
<div class="t " style="left:860.6px;top:363.22px">Yes</div>
<div class="t " style="left:921.8px;top:363.22px">Yes</div>
<div class="t r " style="left:965.4000000000001px;width:60px;top:363.22px">140</div>
<div class="t rev" style="left:1034px;top:363.22px">CMP-009-00004-5</div>
<svg class="ic" style="left:1091.50px;top:363.37px" width="10" height="10" viewBox="0 0 20 20"><circle cx="10" cy="10" r="8" fill="none" stroke="#2ea673" stroke-width="1.7"/><path d="M6.2 10.3 L9 13 L13.8 7.4" fill="none" stroke="#2ea673" stroke-width="1.7" stroke-linecap="round" stroke-linejoin="round"/></svg>
<div class="row rm" style="top:374.92px"></div>
<div class="rnum" style="top:374.92px"></div>
<div class="rnum" style="top:374.92px;left:1087.7px;width:17.8px;background:#252525"></div>
<div class="t c" style="left:4px;width:20.2px;top:377.31px">13</div>
<div class="car" style="left:32.800000000000004px;top:380.36px"></div>
<div class="t rf" style="left:50px;top:377.31px">R2</div>
<div class="t r " style="left:116.19999999999999px;width:60px;top:377.31px">1</div>
<div class="t " style="left:184.5px;top:377.31px">Panasonic</div>
<div class="t " style="left:245.5px;top:377.31px">ERJ-2RKF3833X</div>
<div class="bar" style="top:377.52px;background:#2fc75f"></div>
<div class="t r " style="left:723.3px;width:60px;top:377.31px">7.3</div>
<div class="t " style="left:791.8px;top:377.31px">Yes with Exemption</div>
<div class="t " style="left:860.6px;top:377.31px">Yes</div>
<div class="t " style="left:921.8px;top:377.31px">Yes</div>
<div class="t r " style="left:965.4000000000001px;width:60px;top:377.31px">147</div>
<div class="t rev" style="left:1034px;top:377.31px">CMP-009-00126-3</div>
<svg class="ic" style="left:1091.50px;top:377.46px" width="10" height="10" viewBox="0 0 20 20"><circle cx="10" cy="10" r="8" fill="none" stroke="#2ea673" stroke-width="1.7"/><path d="M6.2 10.3 L9 13 L13.8 7.4" fill="none" stroke="#2ea673" stroke-width="1.7" stroke-linecap="round" stroke-linejoin="round"/></svg>
<div class="row rs" style="top:389.00px"></div>
<div class="rnum" style="top:389.00px"></div>
<div class="rnum" style="top:389.00px;left:1087.7px;width:17.8px;background:#252525"></div>
<div class="t r " style="left:116.19999999999999px;width:60px;top:391.39px">0</div>
<div class="t " style="left:184.5px;top:391.39px">Vishay</div>
<div class="t " style="left:245.5px;top:391.39px">CRCW0402383KFKED</div>
<div class="bar" style="top:391.60px;background:#2fc75f"></div>
<div class="t r " style="left:723.3px;width:60px;top:391.39px">7.3</div>
<div class="t " style="left:791.8px;top:391.39px">Yes with Exemption</div>
<div class="t " style="left:860.6px;top:391.39px">Yes</div>
<div class="t " style="left:921.8px;top:391.39px">Yes</div>
<div class="t r " style="left:965.4000000000001px;width:60px;top:391.39px">140</div>
<div class="t rev" style="left:1034px;top:391.39px">CMP-009-00126-3</div>
<svg class="ic" style="left:1091.50px;top:391.54px" width="10" height="10" viewBox="0 0 20 20"><circle cx="10" cy="10" r="8" fill="none" stroke="#2ea673" stroke-width="1.7"/><path d="M6.2 10.3 L9 13 L13.8 7.4" fill="none" stroke="#2ea673" stroke-width="1.7" stroke-linecap="round" stroke-linejoin="round"/></svg>
<div class="row rm" style="top:403.09px"></div>
<div class="rnum" style="top:403.09px"></div>
<div class="rnum" style="top:403.09px;left:1087.7px;width:17.8px;background:#252525"></div>
<div class="t c" style="left:4px;width:20.2px;top:405.48px">14</div>
<div class="car" style="left:32.800000000000004px;top:408.53px"></div>
<div class="t rf" style="left:50px;top:405.48px">R3, R9, R14, R18</div>
<div class="t r " style="left:116.19999999999999px;width:60px;top:405.48px">4</div>
<div class="t " style="left:184.5px;top:405.48px">Bourns</div>
<div class="t " style="left:245.5px;top:405.48px">CR0402-JW-102GLF</div>
<div class="bar" style="top:405.69px;background:#2fc75f"></div>
<div class="t r " style="left:723.3px;width:60px;top:405.48px">7.3</div>
<div class="t " style="left:791.8px;top:405.48px">Yes with Exemption</div>
<div class="t " style="left:860.6px;top:405.48px">Yes</div>
<div class="t " style="left:921.8px;top:405.48px">No</div>
<div class="t r " style="left:965.4000000000001px;width:60px;top:405.48px">105</div>
<div class="t rev" style="left:1034px;top:405.48px">CMP-009-00157-3</div>
<svg class="ic" style="left:1091.30px;top:405.23px" width="10.4" height="10.4" viewBox="0 0 20 20"><path d="M10 2.4 L18.2 17.4 H1.8 Z" fill="none" stroke="#e89f35" stroke-width="1.7" stroke-linejoin="round"/><path d="M10 7.6 V12.4" stroke="#e89f35" stroke-width="1.6" stroke-linecap="round"/><circle cx="10" cy="14.9" r="1" fill="#e89f35"/></svg>
<div class="row rs" style="top:417.17px"></div>
<div class="rnum" style="top:417.17px"></div>
<div class="rnum" style="top:417.17px;left:1087.7px;width:17.8px;background:#252525"></div>
<div class="t r " style="left:116.19999999999999px;width:60px;top:419.56px">0</div>
<div class="t " style="left:184.5px;top:419.56px">Yageo</div>
<div class="t " style="left:245.5px;top:419.56px">RC0402JR-071KL</div>
<div class="bar" style="top:419.77px;background:#2fc75f"></div>
<div class="t r " style="left:723.3px;width:60px;top:419.56px">7.3</div>
<div class="t " style="left:791.8px;top:419.56px">Yes with Exemption</div>
<div class="t " style="left:860.6px;top:419.56px">Yes</div>
<div class="t " style="left:921.8px;top:419.56px">Yes</div>
<div class="t r " style="left:965.4000000000001px;width:60px;top:419.56px">126</div>
<div class="t rev" style="left:1034px;top:419.56px">CMP-009-00157-3</div>
<svg class="ic" style="left:1091.30px;top:419.31px" width="10.4" height="10.4" viewBox="0 0 20 20"><path d="M10 2.4 L18.2 17.4 H1.8 Z" fill="none" stroke="#e89f35" stroke-width="1.7" stroke-linejoin="round"/><path d="M10 7.6 V12.4" stroke="#e89f35" stroke-width="1.6" stroke-linecap="round"/><circle cx="10" cy="14.9" r="1" fill="#e89f35"/></svg>
<div class="row rm" style="top:431.26px"></div>
<div class="rnum" style="top:431.26px"></div>
<div class="rnum" style="top:431.26px;left:1087.7px;width:17.8px;background:#252525"></div>
<div class="t c" style="left:4px;width:20.2px;top:433.65px">15</div>
<div class="car" style="left:32.800000000000004px;top:436.70px"></div>
<div class="t rf" style="left:50px;top:433.65px">R4</div>
<div class="t r " style="left:116.19999999999999px;width:60px;top:433.65px">1</div>
<div class="t " style="left:184.5px;top:433.65px">Panasonic</div>
<div class="t " style="left:245.5px;top:433.65px">ERJ-2RKF8452X</div>
<div class="bar" style="top:433.86px;background:#2fc75f"></div>
<div class="t r " style="left:723.3px;width:60px;top:433.65px">7.3</div>
<div class="t " style="left:791.8px;top:433.65px">Yes with Exemption</div>
<div class="t " style="left:860.6px;top:433.65px">Yes</div>
<div class="t " style="left:921.8px;top:433.65px">Yes</div>
<div class="t r " style="left:965.4000000000001px;width:60px;top:433.65px">147</div>
<div class="t rev" style="left:1034px;top:433.65px">CMP-009-00130-3</div>
<svg class="ic" style="left:1091.30px;top:433.40px" width="10.4" height="10.4" viewBox="0 0 20 20"><path d="M10 2.4 L18.2 17.4 H1.8 Z" fill="none" stroke="#e89f35" stroke-width="1.7" stroke-linejoin="round"/><path d="M10 7.6 V12.4" stroke="#e89f35" stroke-width="1.6" stroke-linecap="round"/><circle cx="10" cy="14.9" r="1" fill="#e89f35"/></svg>
<div class="row rs" style="top:445.34px"></div>
<div class="rnum" style="top:445.34px"></div>
<div class="rnum" style="top:445.34px;left:1087.7px;width:17.8px;background:#252525"></div>
<div class="t r " style="left:116.19999999999999px;width:60px;top:447.73px">0</div>
<div class="t " style="left:184.5px;top:447.73px">Bourns</div>
<div class="t " style="left:245.5px;top:447.73px">CR0402-FX-8452GLF</div>
<div class="bar" style="top:447.94px;background:#2fc75f"></div>
<div class="t r " style="left:723.3px;width:60px;top:447.73px">7.3</div>
<div class="t " style="left:791.8px;top:447.73px">Yes with Exemption</div>
<div class="t " style="left:860.6px;top:447.73px">Yes</div>
<div class="t " style="left:921.8px;top:447.73px">No</div>
<div class="t r " style="left:965.4000000000001px;width:60px;top:447.73px">105</div>
<div class="t rev" style="left:1034px;top:447.73px">CMP-009-00130-3</div>
<svg class="ic" style="left:1091.30px;top:447.48px" width="10.4" height="10.4" viewBox="0 0 20 20"><path d="M10 2.4 L18.2 17.4 H1.8 Z" fill="none" stroke="#e89f35" stroke-width="1.7" stroke-linejoin="round"/><path d="M10 7.6 V12.4" stroke="#e89f35" stroke-width="1.6" stroke-linecap="round"/><circle cx="10" cy="14.9" r="1" fill="#e89f35"/></svg>
<div class="row rm" style="top:459.43px"></div>
<div class="rnum" style="top:459.43px"></div>
<div class="rnum" style="top:459.43px;left:1087.7px;width:17.8px;background:#252525"></div>
<div class="t c" style="left:4px;width:20.2px;top:461.82px">16</div>
<div class="car" style="left:32.800000000000004px;top:464.87px"></div>
<div class="t rf" style="left:50px;top:461.82px">R5, R6</div>
<div class="t r " style="left:116.19999999999999px;width:60px;top:461.82px">2</div>
<div class="t " style="left:184.5px;top:461.82px">Bourns</div>
<div class="t " style="left:245.5px;top:461.82px">CR0402-JW-222GLF</div>
<div class="bar" style="top:462.03px;background:#2fc75f"></div>
<div class="t r " style="left:723.3px;width:60px;top:461.82px">7.3</div>
<div class="t " style="left:791.8px;top:461.82px">Yes with Exemption</div>
<div class="t " style="left:860.6px;top:461.82px">Yes</div>
<div class="t " style="left:921.8px;top:461.82px">No</div>
<div class="t r " style="left:965.4000000000001px;width:60px;top:461.82px">105</div>
<div class="t rev" style="left:1034px;top:461.82px">CMP-009-00166-3</div>
<svg class="ic" style="left:1091.30px;top:461.57px" width="10.4" height="10.4" viewBox="0 0 20 20"><path d="M10 2.4 L18.2 17.4 H1.8 Z" fill="none" stroke="#e89f35" stroke-width="1.7" stroke-linejoin="round"/><path d="M10 7.6 V12.4" stroke="#e89f35" stroke-width="1.6" stroke-linecap="round"/><circle cx="10" cy="14.9" r="1" fill="#e89f35"/></svg>
<div class="row rs" style="top:473.51px"></div>
<div class="rnum" style="top:473.51px"></div>
<div class="rnum" style="top:473.51px;left:1087.7px;width:17.8px;background:#252525"></div>
<div class="t r " style="left:116.19999999999999px;width:60px;top:475.90px">0</div>
<div class="t " style="left:184.5px;top:475.90px">Yageo</div>
<div class="t " style="left:245.5px;top:475.90px">RC0402JR-072K2L</div>
<div class="bar" style="top:476.11px;background:#2fc75f"></div>
<div class="t r " style="left:723.3px;width:60px;top:475.90px">7.3</div>
<div class="t " style="left:791.8px;top:475.90px">Yes with Exemption</div>
<div class="t " style="left:860.6px;top:475.90px">Yes</div>
<div class="t " style="left:921.8px;top:475.90px">Yes</div>
<div class="t r " style="left:965.4000000000001px;width:60px;top:475.90px">126</div>
<div class="t rev" style="left:1034px;top:475.90px">CMP-009-00166-3</div>
<svg class="ic" style="left:1091.30px;top:475.65px" width="10.4" height="10.4" viewBox="0 0 20 20"><path d="M10 2.4 L18.2 17.4 H1.8 Z" fill="none" stroke="#e89f35" stroke-width="1.7" stroke-linejoin="round"/><path d="M10 7.6 V12.4" stroke="#e89f35" stroke-width="1.6" stroke-linecap="round"/><circle cx="10" cy="14.9" r="1" fill="#e89f35"/></svg>
<div class="row rm" style="top:487.60px"></div>
<div class="rnum" style="top:487.60px"></div>
<div class="rnum" style="top:487.60px;left:1087.7px;width:17.8px;background:#252525"></div>
<div class="t c" style="left:4px;width:20.2px;top:489.99px">17</div>
<div class="car" style="left:32.800000000000004px;top:493.04px"></div>
<div class="t rf" style="left:50px;top:489.99px">R7, R8, R11, R16</div>
<div class="t r " style="left:116.19999999999999px;width:60px;top:489.99px">4</div>
<div class="t " style="left:184.5px;top:489.99px">Bourns</div>
<div class="t " style="left:245.5px;top:489.99px">CR0402-JW-201GLF</div>
<div class="bar" style="top:490.20px;background:#2fc75f"></div>
<div class="t r " style="left:723.3px;width:60px;top:489.99px">7.3</div>
<div class="t " style="left:791.8px;top:489.99px">Yes with Exemption</div>
<div class="t " style="left:860.6px;top:489.99px">Yes</div>
<div class="t " style="left:921.8px;top:489.99px">No</div>
<div class="t r " style="left:965.4000000000001px;width:60px;top:489.99px">105</div>
<div class="t rev" style="left:1034px;top:489.99px">CMP-009-00161-3</div>
<svg class="ic" style="left:1091.30px;top:489.74px" width="10.4" height="10.4" viewBox="0 0 20 20"><path d="M10 2.4 L18.2 17.4 H1.8 Z" fill="none" stroke="#e89f35" stroke-width="1.7" stroke-linejoin="round"/><path d="M10 7.6 V12.4" stroke="#e89f35" stroke-width="1.6" stroke-linecap="round"/><circle cx="10" cy="14.9" r="1" fill="#e89f35"/></svg>
<div class="row rs" style="top:501.68px"></div>
<div class="rnum" style="top:501.68px"></div>
<div class="rnum" style="top:501.68px;left:1087.7px;width:17.8px;background:#252525"></div>
<div class="t r " style="left:116.19999999999999px;width:60px;top:504.07px">0</div>
<div class="t " style="left:184.5px;top:504.07px">Yageo</div>
<div class="t " style="left:245.5px;top:504.07px">RC0402JR-07200RL</div>
<div class="bar" style="top:504.28px;background:#2fc75f"></div>
<div class="t r " style="left:723.3px;width:60px;top:504.07px">7.3</div>
<div class="t " style="left:791.8px;top:504.07px">Yes with Exemption</div>
<div class="t " style="left:860.6px;top:504.07px">Yes</div>
<div class="t " style="left:921.8px;top:504.07px">Yes</div>
<div class="t r " style="left:965.4000000000001px;width:60px;top:504.07px">126</div>
<div class="t rev" style="left:1034px;top:504.07px">CMP-009-00161-3</div>
<svg class="ic" style="left:1091.30px;top:503.82px" width="10.4" height="10.4" viewBox="0 0 20 20"><path d="M10 2.4 L18.2 17.4 H1.8 Z" fill="none" stroke="#e89f35" stroke-width="1.7" stroke-linejoin="round"/><path d="M10 7.6 V12.4" stroke="#e89f35" stroke-width="1.6" stroke-linecap="round"/><circle cx="10" cy="14.9" r="1" fill="#e89f35"/></svg>
<div class="row rm" style="top:515.76px"></div>
<div class="rnum" style="top:515.76px"></div>
<div class="rnum" style="top:515.76px;left:1087.7px;width:17.8px;background:#252525"></div>
<div class="t c" style="left:4px;width:20.2px;top:518.16px">18</div>
<div class="car" style="left:32.800000000000004px;top:521.21px"></div>
<div class="t rf" style="left:50px;top:518.16px">R10, R15, R17, R27</div>
<div class="t r " style="left:116.19999999999999px;width:60px;top:518.16px">4</div>
<div class="t " style="left:184.5px;top:518.16px">Bourns</div>
<div class="t " style="left:245.5px;top:518.16px">CR0402-JW-105GLF</div>
<div class="bar" style="top:518.37px;background:#2fc75f"></div>
<div class="t r " style="left:723.3px;width:60px;top:518.16px">7.3</div>
<div class="t " style="left:791.8px;top:518.16px">Yes with Exemption</div>
<div class="t " style="left:860.6px;top:518.16px">Yes</div>
<div class="t " style="left:921.8px;top:518.16px">No</div>
<div class="t r " style="left:965.4000000000001px;width:60px;top:518.16px">105</div>
<div class="t rev" style="left:1034px;top:518.16px">CMP-009-00151-3</div>
<svg class="ic" style="left:1091.30px;top:517.91px" width="10.4" height="10.4" viewBox="0 0 20 20"><path d="M10 2.4 L18.2 17.4 H1.8 Z" fill="none" stroke="#e89f35" stroke-width="1.7" stroke-linejoin="round"/><path d="M10 7.6 V12.4" stroke="#e89f35" stroke-width="1.6" stroke-linecap="round"/><circle cx="10" cy="14.9" r="1" fill="#e89f35"/></svg>
<div class="row rs" style="top:529.85px"></div>
<div class="rnum" style="top:529.85px"></div>
<div class="rnum" style="top:529.85px;left:1087.7px;width:17.8px;background:#252525"></div>
<div class="t r " style="left:116.19999999999999px;width:60px;top:532.24px">0</div>
<div class="t " style="left:184.5px;top:532.24px">Yageo</div>
<div class="t " style="left:245.5px;top:532.24px">RC0402JR-071ML</div>
<div class="bar" style="top:532.45px;background:#2fc75f"></div>
<div class="t r " style="left:723.3px;width:60px;top:532.24px">7.3</div>
<div class="t " style="left:791.8px;top:532.24px">Yes with Exemption</div>
<div class="t " style="left:860.6px;top:532.24px">Yes</div>
<div class="t " style="left:921.8px;top:532.24px">Yes</div>
<div class="t r " style="left:965.4000000000001px;width:60px;top:532.24px">126</div>
<div class="t rev" style="left:1034px;top:532.24px">CMP-009-00151-3</div>
<svg class="ic" style="left:1091.30px;top:531.99px" width="10.4" height="10.4" viewBox="0 0 20 20"><path d="M10 2.4 L18.2 17.4 H1.8 Z" fill="none" stroke="#e89f35" stroke-width="1.7" stroke-linejoin="round"/><path d="M10 7.6 V12.4" stroke="#e89f35" stroke-width="1.6" stroke-linecap="round"/><circle cx="10" cy="14.9" r="1" fill="#e89f35"/></svg>
<div class="row rm" style="top:543.94px"></div>
<div class="rnum" style="top:543.94px"></div>
<div class="rnum" style="top:543.94px;left:1087.7px;width:17.8px;background:#252525"></div>
<div class="t c" style="left:4px;width:20.2px;top:546.33px">19</div>
<div class="car" style="left:32.800000000000004px;top:549.38px"></div>
<div class="t rf" style="left:50px;top:546.33px">R12, R13</div>
<div class="t r " style="left:116.19999999999999px;width:60px;top:546.33px">2</div>
<div class="t " style="left:184.5px;top:546.33px">Yageo</div>
<div class="t " style="left:245.5px;top:546.33px">RC0603JR-07120RL</div>
<div class="bar" style="top:546.54px;background:#2fc75f"></div>
<div class="t r " style="left:723.3px;width:60px;top:546.33px">7.3</div>
<div class="t " style="left:791.8px;top:546.33px">Yes with Exemption</div>
<div class="t " style="left:860.6px;top:546.33px">Yes</div>
<div class="t " style="left:921.8px;top:546.33px">Yes</div>
<div class="t r " style="left:965.4000000000001px;width:60px;top:546.33px">126</div>
<div class="t rev" style="left:1034px;top:546.33px">CMP-009-00176-3</div>
<svg class="ic" style="left:1091.30px;top:546.08px" width="10.4" height="10.4" viewBox="0 0 20 20"><path d="M10 2.4 L18.2 17.4 H1.8 Z" fill="none" stroke="#e89f35" stroke-width="1.7" stroke-linejoin="round"/><path d="M10 7.6 V12.4" stroke="#e89f35" stroke-width="1.6" stroke-linecap="round"/><circle cx="10" cy="14.9" r="1" fill="#e89f35"/></svg>
<div class="row rs" style="top:558.02px"></div>
<div class="rnum" style="top:558.02px"></div>
<div class="rnum" style="top:558.02px;left:1087.7px;width:17.8px;background:#252525"></div>
<div class="t r " style="left:116.19999999999999px;width:60px;top:560.41px">0</div>
<div class="t " style="left:184.5px;top:560.41px">Panasonic</div>
<div class="t " style="left:245.5px;top:560.41px">ERJ-3GEYJ121V</div>
<div class="bar" style="top:560.62px;background:#2fc75f"></div>
<div class="t r " style="left:723.3px;width:60px;top:560.41px">7.3</div>
<div class="t " style="left:791.8px;top:560.41px">Yes with Exemption</div>
<div class="t " style="left:860.6px;top:560.41px">Yes</div>
<div class="t " style="left:921.8px;top:560.41px">Yes</div>
<div class="t r " style="left:965.4000000000001px;width:60px;top:560.41px">147</div>
<div class="t rev" style="left:1034px;top:560.41px">CMP-009-00176-3</div>
<svg class="ic" style="left:1091.30px;top:560.16px" width="10.4" height="10.4" viewBox="0 0 20 20"><path d="M10 2.4 L18.2 17.4 H1.8 Z" fill="none" stroke="#e89f35" stroke-width="1.7" stroke-linejoin="round"/><path d="M10 7.6 V12.4" stroke="#e89f35" stroke-width="1.6" stroke-linecap="round"/><circle cx="10" cy="14.9" r="1" fill="#e89f35"/></svg>
<div class="row rm" style="top:572.11px"></div>
<div class="rnum" style="top:572.11px"></div>
<div class="rnum" style="top:572.11px;left:1087.7px;width:17.8px;background:#252525"></div>
<div class="t c" style="left:4px;width:20.2px;top:574.50px">20</div>
<div class="car" style="left:32.800000000000004px;top:577.55px"></div>
<div class="t rf" style="left:50px;top:574.50px">R19, R21, R22, R24, R26,...</div>
<div class="t r " style="left:116.19999999999999px;width:60px;top:574.50px">7</div>
<div class="t " style="left:184.5px;top:574.50px">Bourns</div>
<div class="t " style="left:245.5px;top:574.50px">CR0402-FX-1002GLF</div>
<div class="bar" style="top:574.71px;background:#2fc75f"></div>
<div class="t d" style="left:363.3px;top:574.50px">Res Thick Film 0402 10K Ohm 1% 1/16W ±100ppm/°C Molded SMD SMD Paper Tap...</div>
<div class="t act" style="left:618.5px;top:574.50px">Active</div>
<div class="t act" style="left:679.6px;top:574.50px">Active</div>
<div class="t r " style="left:723.3px;width:60px;top:574.50px">7.3</div>
<div class="t " style="left:791.8px;top:574.50px">Yes with Exemption</div>
<div class="t " style="left:860.6px;top:574.50px">Yes</div>
<div class="t " style="left:921.8px;top:574.50px">No</div>
<div class="t r " style="left:965.4000000000001px;width:60px;top:574.50px">105</div>
<div class="t rev" style="left:1034px;top:574.50px">CMP-009-00149-3</div>
<svg class="ic" style="left:1091.30px;top:574.25px" width="10.4" height="10.4" viewBox="0 0 20 20"><path d="M10 2.4 L18.2 17.4 H1.8 Z" fill="none" stroke="#e89f35" stroke-width="1.7" stroke-linejoin="round"/><path d="M10 7.6 V12.4" stroke="#e89f35" stroke-width="1.6" stroke-linecap="round"/><circle cx="10" cy="14.9" r="1" fill="#e89f35"/></svg>
<div class="row rs" style="top:586.19px"></div>
<div class="rnum" style="top:586.19px"></div>
<div class="rnum" style="top:586.19px;left:1087.7px;width:17.8px;background:#252525"></div>
<div class="t r " style="left:116.19999999999999px;width:60px;top:588.58px">0</div>
<div class="t " style="left:184.5px;top:588.58px">Panasonic</div>
<div class="t " style="left:245.5px;top:588.58px">ERJ-2RKF1002X</div>
<div class="bar" style="top:588.79px;background:#2fc75f"></div>
<div class="t d" style="left:363.3px;top:588.58px">Res Thick Film 0402 10K Ohm 1% 1/10W ±100ppm/°C Molded SMD Punched Carrier...</div>
<div class="t act" style="left:618.5px;top:588.58px">Active</div>
<div class="t act" style="left:679.6px;top:588.58px">Active</div>
<div class="t r " style="left:723.3px;width:60px;top:588.58px">7.3</div>
<div class="t " style="left:791.8px;top:588.58px">Yes with Exemption</div>
<div class="t " style="left:860.6px;top:588.58px">Yes</div>
<div class="t " style="left:921.8px;top:588.58px">Yes</div>
<div class="t r " style="left:965.4000000000001px;width:60px;top:588.58px">147</div>
<div class="t rev" style="left:1034px;top:588.58px">CMP-009-00149-3</div>
<svg class="ic" style="left:1091.30px;top:588.33px" width="10.4" height="10.4" viewBox="0 0 20 20"><path d="M10 2.4 L18.2 17.4 H1.8 Z" fill="none" stroke="#e89f35" stroke-width="1.7" stroke-linejoin="round"/><path d="M10 7.6 V12.4" stroke="#e89f35" stroke-width="1.6" stroke-linecap="round"/><circle cx="10" cy="14.9" r="1" fill="#e89f35"/></svg>
<div class="row rm" style="top:600.27px"></div>
<div class="rnum" style="top:600.27px"></div>
<div class="rnum" style="top:600.27px;left:1087.7px;width:17.8px;background:#252525"></div>
<div class="t c" style="left:4px;width:20.2px;top:602.67px">21</div>
<div class="car" style="left:32.800000000000004px;top:605.72px"></div>
<div class="t rf" style="left:50px;top:602.67px">R20</div>
<div class="t r " style="left:116.19999999999999px;width:60px;top:602.67px">1</div>
<div class="t " style="left:184.5px;top:602.67px">Yageo</div>
<div class="t " style="left:245.5px;top:602.67px">RC0402FR-07100RL</div>
<div class="bar" style="top:602.88px;background:#2fc75f"></div>
<div class="t d" style="left:363.3px;top:602.67px">SMD Chip Resistor, 100 Ohm, ± 1%, 63 mW, 0402 [1005 Metric], Thick Film, General...</div>
<div class="t act" style="left:618.5px;top:602.67px">Active</div>
<div class="t act" style="left:679.6px;top:602.67px">Active</div>
<div class="t r " style="left:723.3px;width:60px;top:602.67px">7.3</div>
<div class="t " style="left:791.8px;top:602.67px">Yes with Exemption</div>
<div class="t " style="left:860.6px;top:602.67px">Yes</div>
<div class="t " style="left:921.8px;top:602.67px">Yes</div>
<div class="t r " style="left:965.4000000000001px;width:60px;top:602.67px">126</div>
<div class="t rev" style="left:1034px;top:602.67px">CMP-009-00167-3</div>
<svg class="ic" style="left:1091.30px;top:602.42px" width="10.4" height="10.4" viewBox="0 0 20 20"><path d="M10 2.4 L18.2 17.4 H1.8 Z" fill="none" stroke="#e89f35" stroke-width="1.7" stroke-linejoin="round"/><path d="M10 7.6 V12.4" stroke="#e89f35" stroke-width="1.6" stroke-linecap="round"/><circle cx="10" cy="14.9" r="1" fill="#e89f35"/></svg>
<div class="row rs" style="top:614.36px"></div>
<div class="rnum" style="top:614.36px"></div>
<div class="rnum" style="top:614.36px;left:1087.7px;width:17.8px;background:#252525"></div>
<div class="t r " style="left:116.19999999999999px;width:60px;top:616.75px">0</div>
<div class="t " style="left:184.5px;top:616.75px">Bourns</div>
<div class="t " style="left:245.5px;top:616.75px">CR0402-FX-1000GLF</div>
<div class="bar" style="top:616.96px;background:#2fc75f"></div>
<div class="t d" style="left:363.3px;top:616.75px">SMD Chip Resistor, 100 Ohm, ± 1%, 63 mW, 0402 [1005 Metric], Thick Film, General...</div>
<div class="t act" style="left:618.5px;top:616.75px">Active</div>
<div class="t act" style="left:679.6px;top:616.75px">Active</div>
<div class="t r " style="left:723.3px;width:60px;top:616.75px">7.3</div>
<div class="t " style="left:791.8px;top:616.75px">Yes with Exemption</div>
<div class="t " style="left:860.6px;top:616.75px">Yes</div>
<div class="t " style="left:921.8px;top:616.75px">No</div>
<div class="t r " style="left:965.4000000000001px;width:60px;top:616.75px">105</div>
<div class="t rev" style="left:1034px;top:616.75px">CMP-009-00167-3</div>
<svg class="ic" style="left:1091.30px;top:616.50px" width="10.4" height="10.4" viewBox="0 0 20 20"><path d="M10 2.4 L18.2 17.4 H1.8 Z" fill="none" stroke="#e89f35" stroke-width="1.7" stroke-linejoin="round"/><path d="M10 7.6 V12.4" stroke="#e89f35" stroke-width="1.6" stroke-linecap="round"/><circle cx="10" cy="14.9" r="1" fill="#e89f35"/></svg>
<div class="row rm" style="top:628.44px"></div>
<div class="rnum" style="top:628.44px"></div>
<div class="rnum" style="top:628.44px;left:1087.7px;width:17.8px;background:#252525"></div>
<div class="t c" style="left:4px;width:20.2px;top:630.84px">22</div>
<div class="car" style="left:32.800000000000004px;top:633.89px"></div>
<div class="t rf" style="left:50px;top:630.84px">R23, R25, R30</div>
<div class="t r " style="left:116.19999999999999px;width:60px;top:630.84px">3</div>
<div class="t " style="left:184.5px;top:630.84px">Bourns</div>
<div class="t " style="left:245.5px;top:630.84px">CR0402-FX-4701GLF</div>
<div class="bar" style="top:631.04px;background:#2fc75f"></div>
<div class="t d" style="left:363.3px;top:630.84px">Res Thick Film 0402 4.7K Ohm 1% 1/16W ±100ppm/°C Molded SMD SMD Paper Tap...</div>
<div class="t act" style="left:618.5px;top:630.84px">Active</div>
<div class="t act" style="left:679.6px;top:630.84px">Active</div>
<div class="t r " style="left:723.3px;width:60px;top:630.84px">7.3</div>
<div class="t " style="left:791.8px;top:630.84px">Yes with Exemption</div>
<div class="t " style="left:860.6px;top:630.84px">Yes</div>
<div class="t " style="left:921.8px;top:630.84px">No</div>
<div class="t r " style="left:965.4000000000001px;width:60px;top:630.84px">105</div>
<div class="t rev" style="left:1034px;top:630.84px">CMP-009-00158-3</div>
<svg class="ic" style="left:1091.30px;top:630.59px" width="10.4" height="10.4" viewBox="0 0 20 20"><path d="M10 2.4 L18.2 17.4 H1.8 Z" fill="none" stroke="#e89f35" stroke-width="1.7" stroke-linejoin="round"/><path d="M10 7.6 V12.4" stroke="#e89f35" stroke-width="1.6" stroke-linecap="round"/><circle cx="10" cy="14.9" r="1" fill="#e89f35"/></svg>
<div class="row rs" style="top:642.53px;height:3.87px;border:0;width:1063.5px"></div>
<div class="rnum" style="top:642.53px;height:3.87px;border:0"></div>
<div class="vsep" style="left:23.70px"></div>
<div class="vsep" style="left:44.70px"></div>
<div class="vsep" style="left:129.50px"></div>
<div class="vsep" style="left:179.50px"></div>
<div class="vsep" style="left:240.50px"></div>
<div class="vsep" style="left:350.50px"></div>
<div class="vsep" style="left:358.50px"></div>
<div class="vsep" style="left:613.50px"></div>
<div class="vsep" style="left:674.90px"></div>
<div class="vsep" style="left:735.80px"></div>
<div class="vsep" style="left:787.10px"></div>
<div class="vsep" style="left:855.90px"></div>
<div class="vsep" style="left:917.30px"></div>
<div class="vsep" style="left:978.00px"></div>
<div class="vsep" style="left:1029.70px"></div>
<div class="vsep" style="left:1087.20px"></div>
<div style="position:absolute;left:6.4px;top:648.2px;width:772.4px;height:3.2px;background:#5a5a5a;border-radius:1.6px"></div>
<div style="position:absolute;left:1107.4px;top:92.6px;width:2.9px;height:395px;background:#626262;border-radius:1.4px"></div>
</div>
<div id="xl" style="left:356.0px;top:75.6px;width:363.0px;height:497.0px">
<div class="xt" style="left:0;top:0;width:100%;height:17.80000000000001px"></div>
<div class="xt2" style="left:186.0px;top:0;width:81.0px;height:17.80000000000001px"></div>
<div class="x" style="left:10.60px;top:4.20px;font-size:6.3px;color:#fff;letter-spacing:-0.170px;">Автосохранение</div>
<div style="position:absolute;left:59.5px;top:5.0px;width:19.3px;height:7.8px;border:0.9px solid #fff;border-radius:5px;box-sizing:border-box"></div>
<div style="position:absolute;left:61.60000000000002px;top:6.900000000000006px;width:4px;height:4px;border-radius:50%;background:#fff"></div>
<div class="x" style="left:86.60px;top:4.20px;font-size:8px;color:#fff;font-weight:bold;">»</div>
<div class="x" style="left:112.80px;top:4.20px;font-size:6.3px;color:#e6efe9;letter-spacing:-0.432px;">Prj_AB...</div>
<svg class="ic" style="left:138.3px;top:7.200000000000003px" width="6.6" height="4.4" viewBox="0 0 12 8"><path d="M1 1.5L6 6.5L11 1.5" fill="none" stroke="#fff" stroke-width="1.7"/></svg>
<svg class="ic" style="left:166.60000000000002px;top:4.6000000000000085px" width="8.6" height="8.6" viewBox="0 0 16 16"><circle cx="9.8" cy="6.2" r="4.3" fill="none" stroke="#fff" stroke-width="1.4"/><path d="M6.6 9.4L1.6 14.4" stroke="#fff" stroke-width="1.6" stroke-linecap="round"/></svg>
<div class="x" style="left:193.40px;top:4.20px;font-size:6.3px;color:#dfeae3;letter-spacing:-0.115px;">Damir Khairutdinov</div>
<div style="position:absolute;left:250.20000000000005px;top:2.8000000000000114px;width:12.4px;height:12.4px;border-radius:50%;background:#f2f2f2;overflow:hidden"><div style="position:absolute;left:3.6px;top:2.2px;width:5.2px;height:6.2px;border-radius:45%;background:#c89a80"></div><div style="position:absolute;left:3.4px;top:1.6px;width:5.6px;height:2.6px;border-radius:50% 50% 20% 20%;background:#5a3d2e"></div><div style="position:absolute;left:3.8px;top:6.2px;width:4.8px;height:2.6px;border-radius:20% 20% 50% 50%;background:#6b4a3a"></div><div style="position:absolute;left:1.2px;top:9px;width:10px;height:5px;border-radius:50% 50% 0 0;background:#3a3f4a"></div></div>
<svg class="ic" style="left:275.6px;top:5.400000000000006px" width="8" height="7.4" viewBox="0 0 16 15"><rect x="1" y="1.5" width="14" height="12" rx="1" fill="none" stroke="#fff" stroke-width="1.4"/><path d="M1 5H15" stroke="#fff" stroke-width="1.4"/><path d="M8 12V7.5M5.8 9.6L8 7.3L10.2 9.6" stroke="#fff" stroke-width="1.3" fill="none"/></svg>
<div style="position:absolute;left:300.20000000000005px;top:9.0px;width:5.8px;height:0.8px;background:#eef4f0"></div>
<div style="position:absolute;left:324.0px;top:6.400000000000006px;width:6px;height:5.8px;border:0.8px solid #eef4f0;border-radius:1px;box-sizing:border-box"></div>
<svg class="ic" style="left:347.4px;top:6.300000000000011px" width="6" height="6" viewBox="0 0 12 12"><path d="M1 1L11 11M11 1L1 11" stroke="#eef4f0" stroke-width="1.5"/></svg>
<div style="position:absolute;left:1.3px;top:17.400000000000006px;width:361.09999999999997px;height:15.700000000000003px;background:#f3f3f3"></div>
<div class="x" style="left:7.80px;top:21.70px;font-size:6.7px;color:#5a5a5a;">Файл</div>
<div class="x" style="left:34.40px;top:21.70px;font-size:6.7px;color:#5a5a5a;">Главная</div>
<div class="x" style="left:65.60px;top:21.70px;font-size:6.7px;color:#5a5a5a;">Вставка</div>
<div class="x" style="left:93.60px;top:21.70px;font-size:6.7px;color:#5a5a5a;width:31.20px;overflow:hidden;letter-spacing:-0.22px;">Разметка страницы</div>
<div class="x" style="left:128.00px;top:21.70px;font-size:6.7px;color:#5a5a5a;">Формулы</div>
<div class="x" style="left:163.20px;top:21.70px;font-size:6.7px;color:#5a5a5a;">Данные</div>
<div class="x" style="left:192.40px;top:21.70px;font-size:6.7px;color:#5a5a5a;width:31.80px;overflow:hidden;letter-spacing:-0.22px;">Рецензирование</div>
<div class="x" style="left:227.60px;top:21.70px;font-size:6.7px;color:#5a5a5a;">Вид</div>
<div class="x" style="left:243.40px;top:21.70px;font-size:6.7px;color:#5a5a5a;width:31.40px;overflow:hidden;letter-spacing:-0.22px;">Автоматизация</div>
<div class="x" style="left:278.70px;top:21.70px;font-size:6.7px;color:#5a5a5a;">Справка</div>
<div style="position:absolute;left:62.0px;top:20.900000000000006px;width:0.6px;height:9px;background:#eaeaea"></div>
<div style="position:absolute;left:91.69999999999999px;top:20.900000000000006px;width:0.6px;height:9px;background:#eaeaea"></div>
<div style="position:absolute;left:126.19999999999999px;top:20.900000000000006px;width:0.6px;height:9px;background:#eaeaea"></div>
<div style="position:absolute;left:160.0px;top:20.900000000000006px;width:0.6px;height:9px;background:#eaeaea"></div>
<div style="position:absolute;left:190.5px;top:20.900000000000006px;width:0.6px;height:9px;background:#eaeaea"></div>
<div style="position:absolute;left:224.5px;top:20.900000000000006px;width:0.6px;height:9px;background:#eaeaea"></div>
<div style="position:absolute;left:241.0px;top:20.900000000000006px;width:0.6px;height:9px;background:#eaeaea"></div>
<div style="position:absolute;left:276.0px;top:20.900000000000006px;width:0.6px;height:9px;background:#eaeaea"></div>
<div style="position:absolute;left:306.0px;top:20.900000000000006px;width:0.6px;height:9px;background:#eaeaea"></div>
<div style="position:absolute;left:314.29999999999995px;top:19.60000000000001px;width:16.4px;height:11.8px;border:0.7px solid #d2d2d2;border-radius:2px;background:#fff;box-sizing:border-box"></div>
<svg class="ic" style="left:318.79999999999995px;top:22.400000000000006px" width="7" height="6.4" viewBox="0 0 14 13"><path d="M1.5 1.5H12.5V8.5H6L3.5 11V8.5H1.5Z" fill="none" stroke="#666" stroke-width="1.3"/></svg>
<div style="position:absolute;left:336.0px;top:19.60000000000001px;width:19.8px;height:11.8px;border:0.7px solid #d2d2d2;border-radius:2px;background:#fff;box-sizing:border-box"></div>
<svg class="ic" style="left:338.6px;top:22.200000000000003px" width="7" height="7" viewBox="0 0 14 14"><rect x="2" y="5.5" width="8.5" height="7" rx="1" fill="none" stroke="#666" stroke-width="1.3"/><path d="M6 8V3.5H11M9 1.5L11.3 3.5L9 5.6" fill="none" stroke="#666" stroke-width="1.3"/></svg>
<svg class="ic" style="left:349.6px;top:24.400000000000006px" width="4.4" height="3" viewBox="0 0 10 7"><path d="M1 1L5 5.5L9 1" fill="none" stroke="#666" stroke-width="1.6"/></svg>
<div style="position:absolute;left:1.3px;top:33.10000000000001px;width:361.09999999999997px;height:22.299999999999997px;background:#e7e7e7"></div>
<div style="position:absolute;left:4.0px;top:39.60000000000001px;width:50px;height:10.4px;background:#fff"></div>
<div class="x" style="left:5.600000000000023px;top:40.400000000000006px;font-size:6.8px;color:#444">A1</div>
<svg class="ic" style="left:48.60000000000002px;top:43.60000000000001px" width="3.6" height="2.4" viewBox="0 0 10 6"><path d="M0 0H10L5 6Z" fill="#888"/></svg>
<div style="position:absolute;left:61.60000000000002px;top:41.0px;width:0.9px;height:0.9px;background:#b5b5b5"></div>
<div style="position:absolute;left:61.60000000000002px;top:43.0px;width:0.9px;height:0.9px;background:#b5b5b5"></div>
<div style="position:absolute;left:61.60000000000002px;top:45.0px;width:0.9px;height:0.9px;background:#b5b5b5"></div>
<div style="position:absolute;left:61.60000000000002px;top:47.0px;width:0.9px;height:0.9px;background:#b5b5b5"></div>
<div style="position:absolute;left:71.0px;top:39.60000000000001px;width:54px;height:10.4px;background:#fff"></div>
<svg class="ic" style="left:76.5px;top:41.80000000000001px" width="6" height="6" viewBox="0 0 12 12"><path d="M1.5 1.5L10.5 10.5M10.5 1.5L1.5 10.5" stroke="#c2c2c2" stroke-width="1.4"/></svg>
<svg class="ic" style="left:94.60000000000002px;top:41.80000000000001px" width="7" height="6" viewBox="0 0 14 12"><path d="M1.5 6.5L5.2 10.3L12.5 1.5" fill="none" stroke="#a4a4a4" stroke-width="1.4"/></svg>
<div class="x" style="left:112.60000000000002px;top:39.60000000000001px;font-size:8.6px;color:#4a4a4a;font-weight:bold;font-family:'Liberation Serif',serif;font-style:italic">f<span style="font-size:5.4px;position:relative;top:0.8px;left:-0.8px">x</span></div>
<div style="position:absolute;left:127.69999999999999px;top:39.60000000000001px;width:230.90000000000003px;height:10.4px;background:#fff"></div>
<div class="x" style="left:133.2px;top:40.400000000000006px;font-size:6.7px;color:#444">Ref Des</div>
<svg class="ic" style="left:352.6px;top:43.400000000000006px" width="4.6" height="3.2" viewBox="0 0 10 7"><path d="M1 1L5 5.5L9 1" fill="none" stroke="#555" stroke-width="1.8"/></svg>
<div style="position:absolute;left:1.0px;top:55.400000000000006px;width:352px;height:418.29999999999995px;background:#fff;overflow:hidden">
<div style="position:absolute;left:0;top:0;width:100%;height:8.5px;background:#e9e9e9"></div>
<div style="position:absolute;left:12.699999999999989px;top:0;width:73.40000000000003px;height:8.5px;background:#d4d4d4;border-bottom:0.9px solid #217346;box-sizing:border-box"></div>
<div style="position:absolute;left:0;top:8.5px;width:12.699999999999989px;height:500px;background:#e9e9e9"></div>
<div style="position:absolute;left:0;top:8.5px;width:12.699999999999989px;height:8.832px;background:#d4d4d4"></div>
<svg class="ic" style="left:6.600000000000023px;top:2.4000000000000057px" width="5.2" height="5.2" viewBox="0 0 10 10"><path d="M10 0V10H0Z" fill="#b9b9b9"/></svg>
<div class="x" style="left:39.40px;width:20px;text-align:center;top:-0.40px;font-size:6.8px;color:#1f6b43">A</div>
<div class="x" style="left:112.35px;width:20px;text-align:center;top:-0.40px;font-size:6.8px;color:#222">B</div>
<div class="x" style="left:179.35px;width:20px;text-align:center;top:-0.40px;font-size:6.8px;color:#222">C</div>
<div class="x" style="left:261.10px;width:20px;text-align:center;top:-0.40px;font-size:6.8px;color:#222">D</div>
<div class="x" style="left:328.25px;width:20px;text-align:center;top:-0.40px;font-size:6.8px;color:#222">E</div>
<div style="position:absolute;left:85.70px;top:1px;width:0.8px;height:7.5px;background:#c8c8c8"></div>
<div style="position:absolute;left:158.20px;top:1px;width:0.8px;height:7.5px;background:#c8c8c8"></div>
<div style="position:absolute;left:219.70px;top:1px;width:0.8px;height:7.5px;background:#c8c8c8"></div>
<div style="position:absolute;left:321.70px;top:1px;width:0.8px;height:7.5px;background:#c8c8c8"></div>
<div style="position:absolute;left:12.699999999999989px;top:8.5px;width:309.40000000000003px;height:8.832px;background:#d6d6d6"></div>
<div style="position:absolute;left:322.1px;top:8.10px;width:29.899999999999977px;height:0.8px;background:#e0e0e0"></div>
<div style="position:absolute;left:322.1px;top:16.93px;width:29.899999999999977px;height:0.8px;background:#e0e0e0"></div>
<div style="position:absolute;left:322.1px;top:25.76px;width:29.899999999999977px;height:0.8px;background:#e0e0e0"></div>
<div style="position:absolute;left:322.1px;top:34.60px;width:29.899999999999977px;height:0.8px;background:#e0e0e0"></div>
<div style="position:absolute;left:322.1px;top:43.43px;width:29.899999999999977px;height:0.8px;background:#e0e0e0"></div>
<div style="position:absolute;left:322.1px;top:52.26px;width:29.899999999999977px;height:0.8px;background:#e0e0e0"></div>
<div style="position:absolute;left:322.1px;top:61.09px;width:29.899999999999977px;height:0.8px;background:#e0e0e0"></div>
<div style="position:absolute;left:322.1px;top:69.92px;width:29.899999999999977px;height:0.8px;background:#e0e0e0"></div>
<div style="position:absolute;left:322.1px;top:78.76px;width:29.899999999999977px;height:0.8px;background:#e0e0e0"></div>
<div style="position:absolute;left:322.1px;top:87.59px;width:29.899999999999977px;height:0.8px;background:#e0e0e0"></div>
<div style="position:absolute;left:322.1px;top:96.42px;width:29.899999999999977px;height:0.8px;background:#e0e0e0"></div>
<div style="position:absolute;left:322.1px;top:105.25px;width:29.899999999999977px;height:0.8px;background:#e0e0e0"></div>
<div style="position:absolute;left:322.1px;top:114.08px;width:29.899999999999977px;height:0.8px;background:#e0e0e0"></div>
<div style="position:absolute;left:322.1px;top:122.92px;width:29.899999999999977px;height:0.8px;background:#e0e0e0"></div>
<div style="position:absolute;left:322.1px;top:131.75px;width:29.899999999999977px;height:0.8px;background:#e0e0e0"></div>
<div style="position:absolute;left:322.1px;top:140.58px;width:29.899999999999977px;height:0.8px;background:#e0e0e0"></div>
<div style="position:absolute;left:322.1px;top:149.41px;width:29.899999999999977px;height:0.8px;background:#e0e0e0"></div>
<div style="position:absolute;left:322.1px;top:158.24px;width:29.899999999999977px;height:0.8px;background:#e0e0e0"></div>
<div style="position:absolute;left:322.1px;top:167.08px;width:29.899999999999977px;height:0.8px;background:#e0e0e0"></div>
<div style="position:absolute;left:322.1px;top:175.91px;width:29.899999999999977px;height:0.8px;background:#e0e0e0"></div>
<div style="position:absolute;left:322.1px;top:184.74px;width:29.899999999999977px;height:0.8px;background:#e0e0e0"></div>
<div style="position:absolute;left:322.1px;top:193.57px;width:29.899999999999977px;height:0.8px;background:#e0e0e0"></div>
<div style="position:absolute;left:322.1px;top:202.40px;width:29.899999999999977px;height:0.8px;background:#e0e0e0"></div>
<div style="position:absolute;left:322.1px;top:211.24px;width:29.899999999999977px;height:0.8px;background:#e0e0e0"></div>
<div style="position:absolute;left:322.1px;top:220.07px;width:29.899999999999977px;height:0.8px;background:#e0e0e0"></div>
<div style="position:absolute;left:322.1px;top:228.90px;width:29.899999999999977px;height:0.8px;background:#e0e0e0"></div>
<div style="position:absolute;left:322.1px;top:237.73px;width:29.899999999999977px;height:0.8px;background:#e0e0e0"></div>
<div style="position:absolute;left:322.1px;top:246.56px;width:29.899999999999977px;height:0.8px;background:#e0e0e0"></div>
<div style="position:absolute;left:322.1px;top:255.40px;width:29.899999999999977px;height:0.8px;background:#e0e0e0"></div>
<div style="position:absolute;left:322.1px;top:264.23px;width:29.899999999999977px;height:0.8px;background:#e0e0e0"></div>
<div style="position:absolute;left:322.1px;top:273.06px;width:29.899999999999977px;height:0.8px;background:#e0e0e0"></div>
<div style="position:absolute;left:322.1px;top:281.89px;width:29.899999999999977px;height:0.8px;background:#e0e0e0"></div>
<div style="position:absolute;left:322.1px;top:290.72px;width:29.899999999999977px;height:0.8px;background:#e0e0e0"></div>
<div style="position:absolute;left:322.1px;top:299.56px;width:29.899999999999977px;height:0.8px;background:#e0e0e0"></div>
<div style="position:absolute;left:322.1px;top:308.39px;width:29.899999999999977px;height:0.8px;background:#e0e0e0"></div>
<div style="position:absolute;left:322.1px;top:317.22px;width:29.899999999999977px;height:0.8px;background:#e0e0e0"></div>
<div style="position:absolute;left:322.1px;top:326.05px;width:29.899999999999977px;height:0.8px;background:#e0e0e0"></div>
<div style="position:absolute;left:322.1px;top:334.88px;width:29.899999999999977px;height:0.8px;background:#e0e0e0"></div>
<div style="position:absolute;left:322.1px;top:343.72px;width:29.899999999999977px;height:0.8px;background:#e0e0e0"></div>
<div style="position:absolute;left:322.1px;top:352.55px;width:29.899999999999977px;height:0.8px;background:#e0e0e0"></div>
<div style="position:absolute;left:322.1px;top:361.38px;width:29.899999999999977px;height:0.8px;background:#e0e0e0"></div>
<div style="position:absolute;left:322.1px;top:370.21px;width:29.899999999999977px;height:0.8px;background:#e0e0e0"></div>
<div style="position:absolute;left:322.1px;top:379.04px;width:29.899999999999977px;height:0.8px;background:#e0e0e0"></div>
<div style="position:absolute;left:322.1px;top:387.88px;width:29.899999999999977px;height:0.8px;background:#e0e0e0"></div>
<div style="position:absolute;left:322.1px;top:396.71px;width:29.899999999999977px;height:0.8px;background:#e0e0e0"></div>
<div style="position:absolute;left:322.1px;top:405.54px;width:29.899999999999977px;height:0.8px;background:#e0e0e0"></div>
<div style="position:absolute;left:322.1px;top:414.37px;width:29.899999999999977px;height:0.8px;background:#e0e0e0"></div>
<div style="position:absolute;left:322.1px;top:423.20px;width:29.899999999999977px;height:0.8px;background:#e0e0e0"></div>
<div style="position:absolute;left:12.699999999999989px;top:8.05px;width:309.40000000000003px;height:0.9px;background:#9a9a9a"></div>
<div style="position:absolute;left:12.699999999999989px;top:16.88px;width:309.40000000000003px;height:0.9px;background:#9a9a9a"></div>
<div style="position:absolute;left:12.699999999999989px;top:25.71px;width:309.40000000000003px;height:0.9px;background:#9a9a9a"></div>
<div style="position:absolute;left:12.699999999999989px;top:34.55px;width:309.40000000000003px;height:0.9px;background:#9a9a9a"></div>
<div style="position:absolute;left:12.699999999999989px;top:43.38px;width:309.40000000000003px;height:0.9px;background:#9a9a9a"></div>
<div style="position:absolute;left:12.699999999999989px;top:52.21px;width:309.40000000000003px;height:0.9px;background:#9a9a9a"></div>
<div style="position:absolute;left:12.699999999999989px;top:61.04px;width:309.40000000000003px;height:0.9px;background:#9a9a9a"></div>
<div style="position:absolute;left:12.699999999999989px;top:69.87px;width:309.40000000000003px;height:0.9px;background:#9a9a9a"></div>
<div style="position:absolute;left:12.699999999999989px;top:78.71px;width:309.40000000000003px;height:0.9px;background:#9a9a9a"></div>
<div style="position:absolute;left:12.699999999999989px;top:87.54px;width:309.40000000000003px;height:0.9px;background:#9a9a9a"></div>
<div style="position:absolute;left:12.699999999999989px;top:96.37px;width:309.40000000000003px;height:0.9px;background:#9a9a9a"></div>
<div style="position:absolute;left:12.699999999999989px;top:105.20px;width:309.40000000000003px;height:0.9px;background:#9a9a9a"></div>
<div style="position:absolute;left:12.699999999999989px;top:114.03px;width:309.40000000000003px;height:0.9px;background:#9a9a9a"></div>
<div style="position:absolute;left:12.699999999999989px;top:122.87px;width:309.40000000000003px;height:0.9px;background:#9a9a9a"></div>
<div style="position:absolute;left:12.699999999999989px;top:131.70px;width:309.40000000000003px;height:0.9px;background:#9a9a9a"></div>
<div style="position:absolute;left:12.699999999999989px;top:140.53px;width:309.40000000000003px;height:0.9px;background:#9a9a9a"></div>
<div style="position:absolute;left:12.699999999999989px;top:149.36px;width:309.40000000000003px;height:0.9px;background:#9a9a9a"></div>
<div style="position:absolute;left:12.699999999999989px;top:158.19px;width:309.40000000000003px;height:0.9px;background:#9a9a9a"></div>
<div style="position:absolute;left:12.699999999999989px;top:167.03px;width:309.40000000000003px;height:0.9px;background:#9a9a9a"></div>
<div style="position:absolute;left:12.699999999999989px;top:175.86px;width:309.40000000000003px;height:0.9px;background:#9a9a9a"></div>
<div style="position:absolute;left:12.699999999999989px;top:184.69px;width:309.40000000000003px;height:0.9px;background:#9a9a9a"></div>
<div style="position:absolute;left:12.699999999999989px;top:193.52px;width:309.40000000000003px;height:0.9px;background:#9a9a9a"></div>
<div style="position:absolute;left:12.699999999999989px;top:202.35px;width:309.40000000000003px;height:0.9px;background:#9a9a9a"></div>
<div style="position:absolute;left:12.699999999999989px;top:211.19px;width:309.40000000000003px;height:0.9px;background:#9a9a9a"></div>
<div style="position:absolute;left:12.699999999999989px;top:220.02px;width:309.40000000000003px;height:0.9px;background:#9a9a9a"></div>
<div style="position:absolute;left:12.699999999999989px;top:228.85px;width:309.40000000000003px;height:0.9px;background:#9a9a9a"></div>
<div style="position:absolute;left:12.699999999999989px;top:237.68px;width:309.40000000000003px;height:0.9px;background:#9a9a9a"></div>
<div style="position:absolute;left:12.699999999999989px;top:246.51px;width:309.40000000000003px;height:0.9px;background:#9a9a9a"></div>
<div style="position:absolute;left:12.699999999999989px;top:255.35px;width:309.40000000000003px;height:0.9px;background:#9a9a9a"></div>
<div style="position:absolute;left:12.699999999999989px;top:264.18px;width:309.40000000000003px;height:0.9px;background:#9a9a9a"></div>
<div style="position:absolute;left:12.699999999999989px;top:273.01px;width:309.40000000000003px;height:0.9px;background:#9a9a9a"></div>
<div style="position:absolute;left:12.699999999999989px;top:281.84px;width:309.40000000000003px;height:0.9px;background:#9a9a9a"></div>
<div style="position:absolute;left:12.699999999999989px;top:290.67px;width:309.40000000000003px;height:0.9px;background:#9a9a9a"></div>
<div style="position:absolute;left:12.699999999999989px;top:299.51px;width:309.40000000000003px;height:0.9px;background:#9a9a9a"></div>
<div style="position:absolute;left:12.699999999999989px;top:308.34px;width:309.40000000000003px;height:0.9px;background:#9a9a9a"></div>
<div style="position:absolute;left:12.699999999999989px;top:317.17px;width:309.40000000000003px;height:0.9px;background:#9a9a9a"></div>
<div style="position:absolute;left:12.699999999999989px;top:326.00px;width:309.40000000000003px;height:0.9px;background:#9a9a9a"></div>
<div style="position:absolute;left:12.699999999999989px;top:334.83px;width:309.40000000000003px;height:0.9px;background:#9a9a9a"></div>
<div style="position:absolute;left:12.699999999999989px;top:343.67px;width:309.40000000000003px;height:0.9px;background:#9a9a9a"></div>
<div style="position:absolute;left:12.699999999999989px;top:352.50px;width:309.40000000000003px;height:0.9px;background:#9a9a9a"></div>
<div style="position:absolute;left:12.699999999999989px;top:361.33px;width:309.40000000000003px;height:0.9px;background:#9a9a9a"></div>
<div style="position:absolute;left:12.699999999999989px;top:370.16px;width:309.40000000000003px;height:0.9px;background:#9a9a9a"></div>
<div style="position:absolute;left:12.699999999999989px;top:378.99px;width:309.40000000000003px;height:0.9px;background:#9a9a9a"></div>
<div style="position:absolute;left:12.699999999999989px;top:387.83px;width:309.40000000000003px;height:0.9px;background:#9a9a9a"></div>
<div style="position:absolute;left:12.699999999999989px;top:396.66px;width:309.40000000000003px;height:0.9px;background:#9a9a9a"></div>
<div style="position:absolute;left:12.699999999999989px;top:405.49px;width:309.40000000000003px;height:0.9px;background:#9a9a9a"></div>
<div style="position:absolute;left:12.699999999999989px;top:414.32px;width:309.40000000000003px;height:0.9px;background:#9a9a9a"></div>
<div style="position:absolute;left:12.699999999999989px;top:423.15px;width:309.40000000000003px;height:0.9px;background:#9a9a9a"></div>
<div style="position:absolute;left:85.65px;top:8.5px;width:0.9px;height:500px;background:#848484"></div>
<div style="position:absolute;left:158.15px;top:8.5px;width:0.9px;height:500px;background:#848484"></div>
<div style="position:absolute;left:219.65px;top:8.5px;width:0.9px;height:500px;background:#848484"></div>
<div style="position:absolute;left:321.65px;top:8.5px;width:0.9px;height:500px;background:#848484"></div>
<div class="x" style="left:0;width:12.699999999999989px;text-align:center;top:8.62px;font-size:6.8px;color:#1f6b43">1</div>
<div class="x cell" style="left:13.90px;width:71.60px;top:8.62px">Ref Des</div>
<div class="x cell" style="left:87.10px;width:70.70px;text-align:left;top:8.62px">Quantity</div>
<div class="x cell" style="left:159.80px;width:59.90px;top:8.62px">Manufacturer</div>
<div class="x cell dd" style="left:220.80px;width:100.20px;top:8.62px">MPN</div>
<div class="x" style="left:0;width:12.699999999999989px;text-align:center;top:17.45px;font-size:6.8px;color:#2a2a2a">2</div>
<div class="x cell" style="left:13.90px;width:71.60px;top:17.45px">C1, C2, C4, C8, C9, C10, C11, C12</div>
<div class="x cell" style="left:87.10px;width:70.70px;text-align:right;top:17.45px">27</div>
<div class="x cell" style="left:159.80px;width:59.90px;top:17.45px">Vishay Semiconductor</div>
<div class="x cell dd" style="left:220.80px;width:100.20px;top:17.45px">VJ0402Y104KXQPW1BC</div>
<div class="x" style="left:0;width:12.699999999999989px;text-align:center;top:26.28px;font-size:6.8px;color:#2a2a2a">3</div>
<div class="x cell" style="left:159.80px;width:59.90px;top:26.28px">KEMET</div>
<div class="x cell dd" style="left:220.80px;width:100.20px;top:26.28px">C0402C104K8PACTU</div>
<div class="x" style="left:0;width:12.699999999999989px;text-align:center;top:35.11px;font-size:6.8px;color:#2a2a2a">4</div>
<div class="x cell" style="left:13.90px;width:71.60px;top:35.11px">C3, C6, C7</div>
<div class="x cell" style="left:87.10px;width:70.70px;text-align:right;top:35.11px">3</div>
<div class="x cell" style="left:159.80px;width:59.90px;top:35.11px">Samsung</div>
<div class="x cell dd" style="left:220.80px;width:100.20px;top:35.11px">CL21A226MOQNNNE</div>
<div class="x" style="left:0;width:12.699999999999989px;text-align:center;top:43.94px;font-size:6.8px;color:#2a2a2a">5</div>
<div class="x cell" style="left:159.80px;width:59.90px;top:43.94px">Murata</div>
<div class="x cell dd" style="left:220.80px;width:100.20px;top:43.94px">GRM219R61C226ME15L</div>
<div class="x" style="left:0;width:12.699999999999989px;text-align:center;top:52.78px;font-size:6.8px;color:#2a2a2a">6</div>
<div class="x cell" style="left:13.90px;width:71.60px;top:52.78px">C5</div>
<div class="x cell" style="left:87.10px;width:70.70px;text-align:right;top:52.78px">1</div>
<div class="x cell" style="left:159.80px;width:59.90px;top:52.78px">Murata</div>
<div class="x cell dd" style="left:220.80px;width:100.20px;top:52.78px">GRM1555C1H220JA01D</div>
<div class="x" style="left:0;width:12.699999999999989px;text-align:center;top:61.61px;font-size:6.8px;color:#2a2a2a">7</div>
<div class="x cell" style="left:159.80px;width:59.90px;top:61.61px">Kyocera AVX</div>
<div class="x cell dd" style="left:220.80px;width:100.20px;top:61.61px">04025A220JAT2A</div>
<div class="x" style="left:0;width:12.699999999999989px;text-align:center;top:70.44px;font-size:6.8px;color:#2a2a2a">8</div>
<div class="x cell" style="left:13.90px;width:71.60px;top:70.44px">C18, C28, C29, C36, C38, C39</div>
<div class="x cell" style="left:87.10px;width:70.70px;text-align:right;top:70.44px">7</div>
<div class="x cell" style="left:159.80px;width:59.90px;top:70.44px">Murata</div>
<div class="x cell dd" style="left:220.80px;width:100.20px;top:70.44px">GRM155R61C225KE44D</div>
<div class="x" style="left:0;width:12.699999999999989px;text-align:center;top:79.27px;font-size:6.8px;color:#2a2a2a">9</div>
<div class="x cell" style="left:159.80px;width:59.90px;top:79.27px">Murata</div>
<div class="x cell dd" style="left:220.80px;width:100.20px;top:79.27px">GRM155R61C225KE11D</div>
<div class="x" style="left:0;width:12.699999999999989px;text-align:center;top:88.10px;font-size:6.8px;color:#2a2a2a">10</div>
<div class="x cell" style="left:13.90px;width:71.60px;top:88.10px">C24, C25, C26, C27</div>
<div class="x cell" style="left:87.10px;width:70.70px;text-align:right;top:88.10px">4</div>
<div class="x cell" style="left:159.80px;width:59.90px;top:88.10px">Murata</div>
<div class="x cell dd" style="left:220.80px;width:100.20px;top:88.10px">GRM21BR60J107ME15L</div>
<div class="x" style="left:0;width:12.699999999999989px;text-align:center;top:96.94px;font-size:6.8px;color:#2a2a2a">11</div>
<div class="x cell" style="left:159.80px;width:59.90px;top:96.94px">Murata</div>
<div class="x cell dd" style="left:220.80px;width:100.20px;top:96.94px">GRM21BR60G107ME15L</div>
<div class="x" style="left:0;width:12.699999999999989px;text-align:center;top:105.77px;font-size:6.8px;color:#2a2a2a">12</div>
<div class="x cell" style="left:13.90px;width:71.60px;top:105.77px">C40, C41</div>
<div class="x cell" style="left:87.10px;width:70.70px;text-align:right;top:105.77px">2</div>
<div class="x cell" style="left:159.80px;width:59.90px;top:105.77px">KEMET</div>
<div class="x cell dd" style="left:220.80px;width:100.20px;top:105.77px">C0402C120J5GACTU</div>
<div class="x" style="left:0;width:12.699999999999989px;text-align:center;top:114.60px;font-size:6.8px;color:#2a2a2a">13</div>
<div class="x cell" style="left:159.80px;width:59.90px;top:114.60px">Murata</div>
<div class="x cell dd" style="left:220.80px;width:100.20px;top:114.60px">GCM1555C1H120JA16D</div>
<div class="x" style="left:0;width:12.699999999999989px;text-align:center;top:123.43px;font-size:6.8px;color:#2a2a2a">14</div>
<div class="x cell" style="left:13.90px;width:71.60px;top:123.43px">CN1, CN2</div>
<div class="x cell" style="left:87.10px;width:70.70px;text-align:right;top:123.43px">2</div>
<div class="x cell" style="left:159.80px;width:59.90px;top:123.43px">Hirose</div>
<div class="x cell dd" style="left:220.80px;width:100.20px;top:123.43px">DF12(3.0)-50DS-0.5V(86)</div>
<div class="x" style="left:0;width:12.699999999999989px;text-align:center;top:132.26px;font-size:6.8px;color:#2a2a2a">15</div>
<div class="x cell" style="left:13.90px;width:71.60px;top:132.26px">CN3</div>
<div class="x cell" style="left:87.10px;width:70.70px;text-align:right;top:132.26px">1</div>
<div class="x cell" style="left:159.80px;width:59.90px;top:132.26px">Hirose</div>
<div class="x cell dd" style="left:220.80px;width:100.20px;top:132.26px">DF40C-20DS-0.4V(51)</div>
<div class="x" style="left:0;width:12.699999999999989px;text-align:center;top:141.10px;font-size:6.8px;color:#2a2a2a">16</div>
<div class="x cell" style="left:13.90px;width:71.60px;top:141.10px">CN4</div>
<div class="x cell" style="left:87.10px;width:70.70px;text-align:right;top:141.10px">1</div>
<div class="x cell" style="left:159.80px;width:59.90px;top:141.10px">JST</div>
<div class="x cell dd" style="left:220.80px;width:100.20px;top:141.10px">SM06B-SRSS-TB(LF)(SN)</div>
<div class="x" style="left:0;width:12.699999999999989px;text-align:center;top:149.93px;font-size:6.8px;color:#2a2a2a">17</div>
<div class="x cell" style="left:13.90px;width:71.60px;top:149.93px">D1</div>
<div class="x cell" style="left:87.10px;width:70.70px;text-align:right;top:149.93px">1</div>
<div class="x cell" style="left:159.80px;width:59.90px;top:149.93px">Rohm</div>
<div class="x cell dd" style="left:220.80px;width:100.20px;top:149.93px">1SS400CSFHT2RA</div>
<div class="x" style="left:0;width:12.699999999999989px;text-align:center;top:158.76px;font-size:6.8px;color:#2a2a2a">18</div>
<div class="x cell" style="left:13.90px;width:71.60px;top:158.76px">L1</div>
<div class="x cell" style="left:87.10px;width:70.70px;text-align:right;top:158.76px">1</div>
<div class="x cell" style="left:159.80px;width:59.90px;top:158.76px">TDK</div>
<div class="x cell dd" style="left:220.80px;width:100.20px;top:158.76px">VLS252010HBX-2R2M-1</div>
<div class="x" style="left:0;width:12.699999999999989px;text-align:center;top:167.59px;font-size:6.8px;color:#2a2a2a">19</div>
<div class="x cell" style="left:13.90px;width:71.60px;top:167.59px">R1</div>
<div class="x cell" style="left:87.10px;width:70.70px;text-align:right;top:167.59px">1</div>
<div class="x cell" style="left:159.80px;width:59.90px;top:167.59px">Yageo</div>
<div class="x cell dd" style="left:220.80px;width:100.20px;top:167.59px">RC0402JR-070RL</div>
<div class="x" style="left:0;width:12.699999999999989px;text-align:center;top:176.42px;font-size:6.8px;color:#2a2a2a">20</div>
<div class="x cell" style="left:159.80px;width:59.90px;top:176.42px">Vishay</div>
<div class="x cell dd" style="left:220.80px;width:100.20px;top:176.42px">CRCW04020000Z0ED</div>
<div class="x" style="left:0;width:12.699999999999989px;text-align:center;top:185.26px;font-size:6.8px;color:#2a2a2a">21</div>
<div class="x cell" style="left:13.90px;width:71.60px;top:185.26px">R2</div>
<div class="x cell" style="left:87.10px;width:70.70px;text-align:right;top:185.26px">1</div>
<div class="x cell" style="left:159.80px;width:59.90px;top:185.26px">Panasonic</div>
<div class="x cell dd" style="left:220.80px;width:100.20px;top:185.26px">ERJ-2RKF3833X</div>
<div class="x" style="left:0;width:12.699999999999989px;text-align:center;top:194.09px;font-size:6.8px;color:#2a2a2a">22</div>
<div class="x cell" style="left:159.80px;width:59.90px;top:194.09px">Vishay</div>
<div class="x cell dd" style="left:220.80px;width:100.20px;top:194.09px">CRCW0402383KFKED</div>
<div class="x" style="left:0;width:12.699999999999989px;text-align:center;top:202.92px;font-size:6.8px;color:#2a2a2a">23</div>
<div class="x cell" style="left:13.90px;width:71.60px;top:202.92px">R3, R9, R14, R18</div>
<div class="x cell" style="left:87.10px;width:70.70px;text-align:right;top:202.92px">4</div>
<div class="x cell" style="left:159.80px;width:59.90px;top:202.92px">Bourns</div>
<div class="x cell dd" style="left:220.80px;width:100.20px;top:202.92px">CR0402-JW-102GLF</div>
<div class="x" style="left:0;width:12.699999999999989px;text-align:center;top:211.75px;font-size:6.8px;color:#2a2a2a">24</div>
<div class="x cell" style="left:159.80px;width:59.90px;top:211.75px">Yageo</div>
<div class="x cell dd" style="left:220.80px;width:100.20px;top:211.75px">RC0402JR-071KL</div>
<div class="x" style="left:0;width:12.699999999999989px;text-align:center;top:220.58px;font-size:6.8px;color:#2a2a2a">25</div>
<div class="x cell" style="left:13.90px;width:71.60px;top:220.58px">R4</div>
<div class="x cell" style="left:87.10px;width:70.70px;text-align:right;top:220.58px">1</div>
<div class="x cell" style="left:159.80px;width:59.90px;top:220.58px">Panasonic</div>
<div class="x cell dd" style="left:220.80px;width:100.20px;top:220.58px">ERJ-2RKF8452X</div>
<div class="x" style="left:0;width:12.699999999999989px;text-align:center;top:229.42px;font-size:6.8px;color:#2a2a2a">26</div>
<div class="x cell" style="left:159.80px;width:59.90px;top:229.42px">Bourns</div>
<div class="x cell dd" style="left:220.80px;width:100.20px;top:229.42px">CR0402-FX-8452GLF</div>
<div class="x" style="left:0;width:12.699999999999989px;text-align:center;top:238.25px;font-size:6.8px;color:#2a2a2a">27</div>
<div class="x cell" style="left:13.90px;width:71.60px;top:238.25px">R5, R6</div>
<div class="x cell" style="left:87.10px;width:70.70px;text-align:right;top:238.25px">2</div>
<div class="x cell" style="left:159.80px;width:59.90px;top:238.25px">Bourns</div>
<div class="x cell dd" style="left:220.80px;width:100.20px;top:238.25px">CR0402-JW-222GLF</div>
<div class="x" style="left:0;width:12.699999999999989px;text-align:center;top:247.08px;font-size:6.8px;color:#2a2a2a">28</div>
<div class="x cell" style="left:159.80px;width:59.90px;top:247.08px">Yageo</div>
<div class="x cell dd" style="left:220.80px;width:100.20px;top:247.08px">RC0402JR-072K2L</div>
<div class="x" style="left:0;width:12.699999999999989px;text-align:center;top:255.91px;font-size:6.8px;color:#2a2a2a">29</div>
<div class="x cell" style="left:13.90px;width:71.60px;top:255.91px">R7, R8, R11, R16</div>
<div class="x cell" style="left:87.10px;width:70.70px;text-align:right;top:255.91px">4</div>
<div class="x cell" style="left:159.80px;width:59.90px;top:255.91px">Bourns</div>
<div class="x cell dd" style="left:220.80px;width:100.20px;top:255.91px">CR0402-JW-201GLF</div>
<div class="x" style="left:0;width:12.699999999999989px;text-align:center;top:264.74px;font-size:6.8px;color:#2a2a2a">30</div>
<div class="x cell" style="left:159.80px;width:59.90px;top:264.74px">Yageo</div>
<div class="x cell dd" style="left:220.80px;width:100.20px;top:264.74px">RC0402JR-07200RL</div>
<div class="x" style="left:0;width:12.699999999999989px;text-align:center;top:273.58px;font-size:6.8px;color:#2a2a2a">31</div>
<div class="x cell" style="left:13.90px;width:71.60px;top:273.58px">R10, R15, R17, R27</div>
<div class="x cell" style="left:87.10px;width:70.70px;text-align:right;top:273.58px">4</div>
<div class="x cell" style="left:159.80px;width:59.90px;top:273.58px">Bourns</div>
<div class="x cell dd" style="left:220.80px;width:100.20px;top:273.58px">CR0402-JW-105GLF</div>
<div class="x" style="left:0;width:12.699999999999989px;text-align:center;top:282.41px;font-size:6.8px;color:#2a2a2a">32</div>
<div class="x cell" style="left:159.80px;width:59.90px;top:282.41px">Yageo</div>
<div class="x cell dd" style="left:220.80px;width:100.20px;top:282.41px">RC0402JR-071ML</div>
<div class="x" style="left:0;width:12.699999999999989px;text-align:center;top:291.24px;font-size:6.8px;color:#2a2a2a">33</div>
<div class="x cell" style="left:13.90px;width:71.60px;top:291.24px">R12, R13</div>
<div class="x cell" style="left:87.10px;width:70.70px;text-align:right;top:291.24px">2</div>
<div class="x cell" style="left:159.80px;width:59.90px;top:291.24px">Yageo</div>
<div class="x cell dd" style="left:220.80px;width:100.20px;top:291.24px">RC0603JR-07120RL</div>
<div class="x" style="left:0;width:12.699999999999989px;text-align:center;top:300.07px;font-size:6.8px;color:#2a2a2a">34</div>
<div class="x cell" style="left:159.80px;width:59.90px;top:300.07px">Panasonic</div>
<div class="x cell dd" style="left:220.80px;width:100.20px;top:300.07px">ERJ-3GEYJ121V</div>
<div class="x" style="left:0;width:12.699999999999989px;text-align:center;top:308.90px;font-size:6.8px;color:#2a2a2a">35</div>
<div class="x cell" style="left:13.90px;width:71.60px;top:308.90px">R19, R21, R22, R24, R26, R28</div>
<div class="x cell" style="left:87.10px;width:70.70px;text-align:right;top:308.90px">7</div>
<div class="x cell" style="left:159.80px;width:59.90px;top:308.90px">Bourns</div>
<div class="x cell dd" style="left:220.80px;width:100.20px;top:308.90px">CR0402-FX-1002GLF</div>
<div class="x" style="left:0;width:12.699999999999989px;text-align:center;top:317.74px;font-size:6.8px;color:#2a2a2a">36</div>
<div class="x cell" style="left:159.80px;width:59.90px;top:317.74px">Panasonic</div>
<div class="x cell dd" style="left:220.80px;width:100.20px;top:317.74px">ERJ-2RKF1002X</div>
<div class="x" style="left:0;width:12.699999999999989px;text-align:center;top:326.57px;font-size:6.8px;color:#2a2a2a">37</div>
<div class="x cell" style="left:13.90px;width:71.60px;top:326.57px">R20</div>
<div class="x cell" style="left:87.10px;width:70.70px;text-align:right;top:326.57px">1</div>
<div class="x cell" style="left:159.80px;width:59.90px;top:326.57px">Yageo</div>
<div class="x cell dd" style="left:220.80px;width:100.20px;top:326.57px">RC0402FR-07100RL</div>
<div class="x" style="left:0;width:12.699999999999989px;text-align:center;top:335.40px;font-size:6.8px;color:#2a2a2a">38</div>
<div class="x cell" style="left:159.80px;width:59.90px;top:335.40px">Bourns</div>
<div class="x cell dd" style="left:220.80px;width:100.20px;top:335.40px">CR0402-FX-1000GLF</div>
<div class="x" style="left:0;width:12.699999999999989px;text-align:center;top:344.23px;font-size:6.8px;color:#2a2a2a">39</div>
<div class="x cell" style="left:13.90px;width:71.60px;top:344.23px">R23, R25, R30</div>
<div class="x cell" style="left:87.10px;width:70.70px;text-align:right;top:344.23px">3</div>
<div class="x cell" style="left:159.80px;width:59.90px;top:344.23px">Bourns</div>
<div class="x cell dd" style="left:220.80px;width:100.20px;top:344.23px">CR0402-FX-4701GLF</div>
<div class="x" style="left:0;width:12.699999999999989px;text-align:center;top:353.06px;font-size:6.8px;color:#2a2a2a">40</div>
<div class="x cell" style="left:159.80px;width:59.90px;top:353.06px">Vishay</div>
<div class="x cell dd" style="left:220.80px;width:100.20px;top:353.06px">CRCW04024K70FKED</div>
<div class="x" style="left:0;width:12.699999999999989px;text-align:center;top:361.90px;font-size:6.8px;color:#2a2a2a">41</div>
<div class="x cell" style="left:13.90px;width:71.60px;top:361.90px">RN1, RN2, RN3, RN4, RN5, RN6</div>
<div class="x cell" style="left:87.10px;width:70.70px;text-align:right;top:361.90px">6</div>
<div class="x cell" style="left:159.80px;width:59.90px;top:361.90px">Panasonic</div>
<div class="x cell dd" style="left:220.80px;width:100.20px;top:361.90px">EXB-28V201JX</div>
<div class="x" style="left:0;width:12.699999999999989px;text-align:center;top:370.73px;font-size:6.8px;color:#2a2a2a">42</div>
<div class="x cell" style="left:13.90px;width:71.60px;top:370.73px">U1</div>
<div class="x cell" style="left:87.10px;width:70.70px;text-align:right;top:370.73px">1</div>
<div class="x cell" style="left:159.80px;width:59.90px;top:370.73px">Texas Instruments</div>
<div class="x cell dd" style="left:220.80px;width:100.20px;top:370.73px">TPS62060DSGR</div>
<div class="x" style="left:0;width:12.699999999999989px;text-align:center;top:379.56px;font-size:6.8px;color:#2a2a2a">43</div>
<div class="x cell" style="left:13.90px;width:71.60px;top:379.56px">U2</div>
<div class="x cell" style="left:87.10px;width:70.70px;text-align:right;top:379.56px">1</div>
<div class="x cell" style="left:159.80px;width:59.90px;top:379.56px">Texas Instruments</div>
<div class="x cell dd" style="left:220.80px;width:100.20px;top:379.56px">LP5907SNX-3.3/NOPB</div>
<div class="x" style="left:0;width:12.699999999999989px;text-align:center;top:388.39px;font-size:6.8px;color:#2a2a2a">44</div>
<div class="x cell" style="left:13.90px;width:71.60px;top:388.39px">U3</div>
<div class="x cell" style="left:87.10px;width:70.70px;text-align:right;top:388.39px">1</div>
<div class="x cell" style="left:159.80px;width:59.90px;top:388.39px">Infineon</div>
<div class="x cell dd" style="left:220.80px;width:100.20px;top:388.39px">FM25V02A-DG</div>
<div class="x" style="left:0;width:12.699999999999989px;text-align:center;top:397.22px;font-size:6.8px;color:#2a2a2a">45</div>
<div class="x cell" style="left:13.90px;width:71.60px;top:397.22px">U4, U5, U6</div>
<div class="x cell" style="left:87.10px;width:70.70px;text-align:right;top:397.22px">3</div>
<div class="x cell" style="left:159.80px;width:59.90px;top:397.22px">Texas Instruments</div>
<div class="x cell dd" style="left:220.80px;width:100.20px;top:397.22px">TXB0108DQSR</div>
<div class="x" style="left:0;width:12.699999999999989px;text-align:center;top:406.06px;font-size:6.8px;color:#2a2a2a">46</div>
<div class="x cell" style="left:13.90px;width:71.60px;top:406.06px">U7</div>
<div class="x cell" style="left:87.10px;width:70.70px;text-align:right;top:406.06px">1</div>
<div class="x cell" style="left:159.80px;width:59.90px;top:406.06px">Texas Instruments</div>
<div class="x cell dd" style="left:220.80px;width:100.20px;top:406.06px">TXS0102DQMR</div>
<div class="x" style="left:0;width:12.699999999999989px;text-align:center;top:414.89px;font-size:6.8px;color:#2a2a2a">47</div>
<div class="x cell" style="left:13.90px;width:71.60px;top:414.89px">U8, U10</div>
<div class="x cell" style="left:87.10px;width:70.70px;text-align:right;top:414.89px">2</div>
<div class="x cell" style="left:159.80px;width:59.90px;top:414.89px">Texas Instruments</div>
<div class="x cell dd" style="left:220.80px;width:100.20px;top:414.89px">TLC5620INEA</div>
<div style="position:absolute;left:11.90px;top:7.70px;width:74.80px;height:10.23px;border:0.9px solid #3f8a66;box-sizing:border-box"></div>
<div style="position:absolute;left:84.80px;top:16.03px;width:2.6px;height:2.6px;background:#217346;border:0.5px solid #fff;box-sizing:border-box"></div>
</div>
<div style="position:absolute;left:353.0px;top:55.400000000000006px;width:9.399999999999977px;height:418.29999999999995px;background:#f1f1f1"></div>
<div style="position:absolute;left:353.20000000000005px;top:56.0px;width:7.7px;height:7.4px;background:#fff;border:0.5px solid #d0d0d0;box-sizing:border-box"></div>
<svg class="ic" style="left:355.20000000000005px;top:58.400000000000006px" width="4" height="2.6" viewBox="0 0 10 6"><path d="M0 6H10L5 0Z" fill="#444"/></svg>
<div style="position:absolute;left:353.20000000000005px;top:64.4px;width:7.7px;height:364px;background:#fff;border:0.5px solid #d0d0d0;box-sizing:border-box"></div>
<div style="position:absolute;left:353.20000000000005px;top:466.0px;width:7.7px;height:7.4px;background:#fff;border:0.5px solid #d0d0d0;box-sizing:border-box"></div>
<svg class="ic" style="left:355.20000000000005px;top:468.6px" width="4" height="2.6" viewBox="0 0 10 6"><path d="M0 0H10L5 6Z" fill="#444"/></svg>
<div style="position:absolute;left:1.3px;top:473.69999999999993px;width:361.09999999999997px;height:11.5px;background:#e9e9e9"></div>
<div style="position:absolute;left:40.80000000000001px;top:473.69999999999993px;width:51.69999999999999px;height:10.700000000000045px;background:#fff;border-bottom:1.1px solid #217346;box-sizing:border-box"></div>
<div class="x" style="left:40.80000000000001px;width:51.69999999999999px;text-align:center;top:474.0px;font-size:6.5px;color:#217346;font-weight:bold;letter-spacing:-0.279px;">Prj_ABC_V1_2</div>
<div class="x" style="left:96.60000000000002px;top:474.0px;font-size:6.7px;color:#666">Sheet2</div>
<div class="x" style="left:127.0px;top:474.0px;font-size:6.7px;color:#666">Sheet3</div>
<div style="position:absolute;left:122.19999999999999px;top:475.79999999999995px;width:0.7px;height:7.4px;background:#c9c9c9"></div>
<div style="position:absolute;left:152.39999999999998px;top:475.79999999999995px;width:0.7px;height:7.4px;background:#c9c9c9"></div>
<svg class="ic" style="left:9.800000000000011px;top:477.4px" width="3" height="4" viewBox="0 0 6 8"><path d="M5 1L1.5 4L5 7" fill="none" stroke="#cfcfcf" stroke-width="1.3"/></svg>
<svg class="ic" style="left:21.399999999999977px;top:477.4px" width="3" height="4" viewBox="0 0 6 8"><path d="M1 1L4.5 4L1 7" fill="none" stroke="#cfcfcf" stroke-width="1.3"/></svg>
<svg class="ic" style="left:165.20000000000005px;top:475.6px" width="7.6" height="7.6" viewBox="0 0 16 16"><circle cx="8" cy="8" r="6.8" fill="none" stroke="#777" stroke-width="1.1"/><path d="M8 4.6V11.4M4.6 8H11.4" stroke="#777" stroke-width="1.1"/></svg>
<div style="position:absolute;left:217.0px;top:476.79999999999995px;width:0.9px;height:0.9px;background:#b5b5b5"></div>
<div style="position:absolute;left:217.0px;top:478.79999999999995px;width:0.9px;height:0.9px;background:#b5b5b5"></div>
<div style="position:absolute;left:217.0px;top:480.79999999999995px;width:0.9px;height:0.9px;background:#b5b5b5"></div>
<div style="position:absolute;left:223.60000000000002px;top:475.0px;width:7.4px;height:8.6px;background:#fff;border:0.5px solid #d0d0d0;box-sizing:border-box"></div>
<svg class="ic" style="left:226.0px;top:477.4px" width="2.6" height="4" viewBox="0 0 6 10"><path d="M6 0V10L0 5Z" fill="#444"/></svg>
<div style="position:absolute;left:232.0px;top:475.0px;width:85.60000000000002px;height:8.6px;background:#fff;border:0.5px solid #d0d0d0;box-sizing:border-box"></div>
<div style="position:absolute;left:344.20000000000005px;top:475.0px;width:7.4px;height:8.6px;background:#fff;border:0.5px solid #d0d0d0;box-sizing:border-box"></div>
<svg class="ic" style="left:346.79999999999995px;top:477.4px" width="2.6" height="4" viewBox="0 0 6 10"><path d="M0 0V10L6 5Z" fill="#444"/></svg>
<div style="position:absolute;left:1.3px;top:485.19999999999993px;width:361.09999999999997px;height:11.200000000000045px;background:#f3f3f3"></div>
<div class="x" style="left:4.199999999999989px;top:486.19999999999993px;font-size:5.6px;color:#666">Готово</div>
<svg class="ic" style="left:125.0px;top:487.79999999999995px" width="8" height="6.8" viewBox="0 0 16 14"><rect x="1" y="1" width="12" height="8.5" fill="none" stroke="#555" stroke-width="1.3"/><path d="M4 12.5H10" stroke="#555" stroke-width="1.3"/><rect x="9" y="6" width="6" height="7" fill="#f3f3f3" stroke="#555" stroke-width="1.2"/></svg>
<div class="x" style="left:134.0px;top:486.19999999999993px;font-size:5.45px;color:#666">Параметры отображения</div>
<div style="position:absolute;left:205.0px;top:485.6px;width:20px;height:10.6px;background:#d2d2d2"></div>
<svg class="ic" style="left:211.0px;top:487.6px" width="8" height="6.6" viewBox="0 0 16 13"><rect x="1" y="1" width="14" height="11" fill="none" stroke="#555" stroke-width="1.2"/><path d="M1 4.6H15M1 8.2H15M5.6 1V12M10.3 1V12" stroke="#555" stroke-width="1"/></svg>
<svg class="ic" style="left:231.70000000000005px;top:487.6px" width="8" height="6.6" viewBox="0 0 16 13"><rect x="1" y="1" width="14" height="11" fill="none" stroke="#555" stroke-width="1.2"/><path d="M5.6 1V12M10.3 1V12" stroke="#555" stroke-width="1.4"/></svg>
<svg class="ic" style="left:252.0px;top:487.6px" width="8" height="6.6" viewBox="0 0 16 13"><rect x="1" y="1" width="14" height="11" fill="none" stroke="#555" stroke-width="1.2"/><path d="M4 7.5H10V3.5" fill="none" stroke="#555" stroke-width="1.1"/></svg>
<div class="x" style="left:269.20000000000005px;top:485.99999999999994px;font-size:6.4px;color:#888">−</div>
<div style="position:absolute;left:275.4px;top:491.1px;width:51px;height:0.7px;background:#8a8a8a"></div>
<div style="position:absolute;left:300.20000000000005px;top:488.6px;width:1.8px;height:5.6px;background:#333"></div>
<div class="x" style="left:329.0px;top:485.99999999999994px;font-size:6.4px;color:#888">+</div>
<div class="x" style="left:339.4px;top:486.19999999999993px;font-size:5.6px;color:#777">100%</div>
</div>
<svg class="ic" style="left:563.6px;top:81.2px" width="4.6" height="6.6" viewBox="0 0 12 18"><path d="M1 1V14.5L4.4 11.4L6.8 17L9 16L6.6 10.6H11Z" fill="#111" stroke="#fff" stroke-width="1.3"/></svg>
</div></body></html>
